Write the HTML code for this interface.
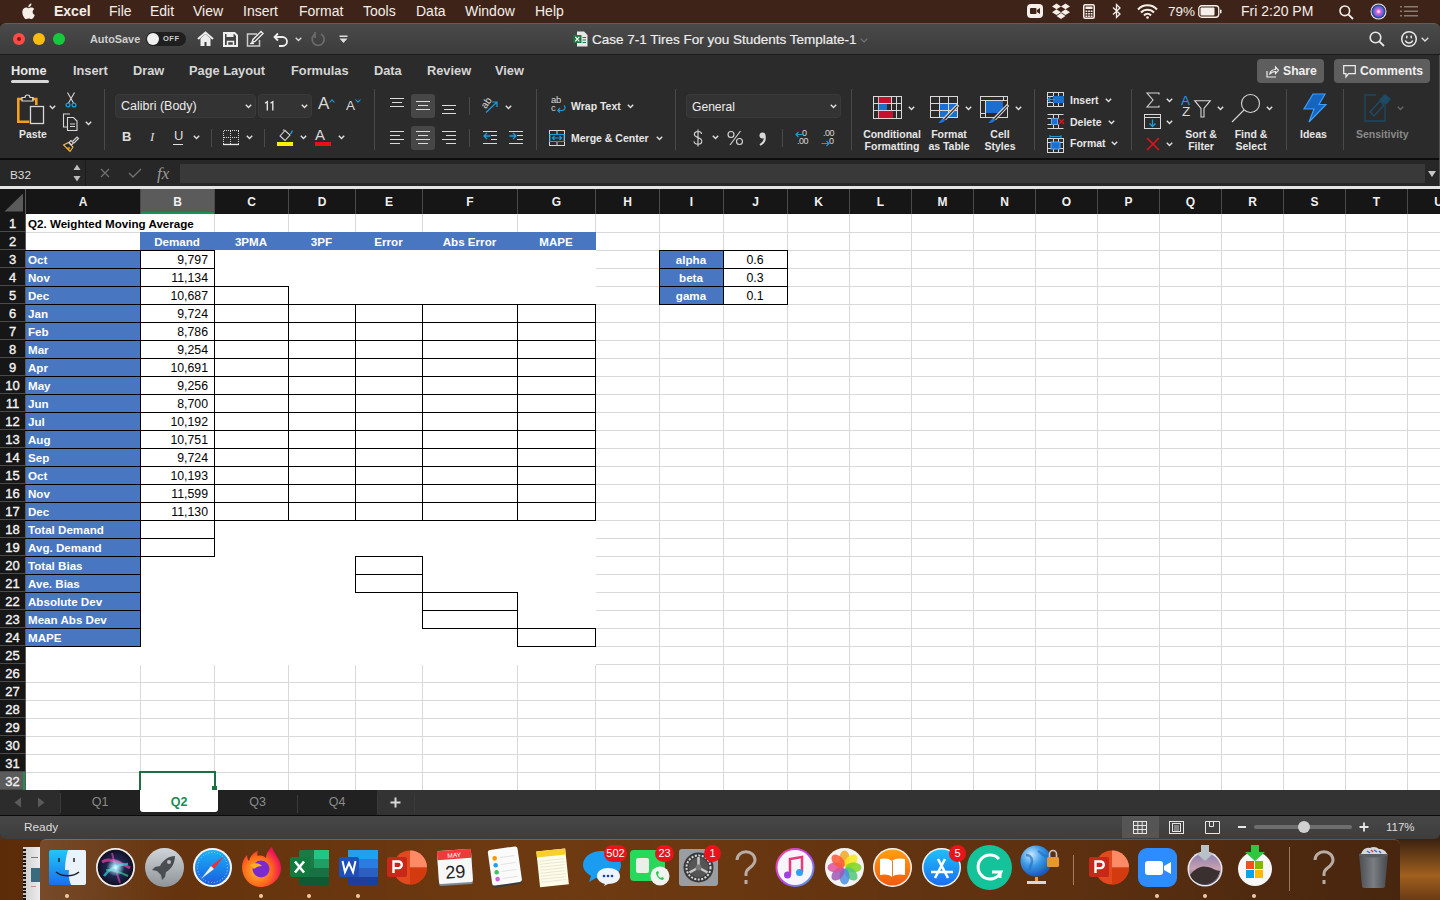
<!DOCTYPE html><html><head><meta charset="utf-8"><style>
*{margin:0;padding:0;box-sizing:border-box}
html,body{width:1440px;height:900px;overflow:hidden;background:#3a1f0e;font-family:"Liberation Sans",sans-serif}
.a{position:absolute}
svg{position:absolute;overflow:visible}
.mb{position:absolute;top:3px;font-size:14px;color:#f5eee9;line-height:17px;white-space:nowrap}
.tb{position:absolute;top:63px;font-size:12.8px;font-weight:bold;color:#d9d9d9;line-height:15px;white-space:nowrap}
.rl{position:absolute;font-size:11px;color:#e6e6e6;line-height:12px;white-space:nowrap;text-align:center}
.sep{position:absolute;width:1px;background:#4a4a4a}
.ch{position:absolute;top:189px;height:25px;background:#161616;color:#f0f0f0;font-size:12px;font-weight:bold;text-align:center;line-height:27px}
.rh{position:absolute;left:0;width:25px;height:17px;color:#f4f4f4;font-size:13px;font-weight:normal;text-align:center;line-height:20px;-webkit-text-stroke:0.35px #f4f4f4}
.t{position:absolute;white-space:nowrap;line-height:18px;height:18px}
.lb{font-size:11.6px;font-weight:bold;color:#fff}
.nm{font-size:12.3px;color:#000}
.bx{position:absolute;border:1px solid #000}
.gv{position:absolute;width:1px;background:#d6d6d6}
.gh{position:absolute;height:1px;background:#d6d6d6}
.bl{position:absolute;background:#4876c0}
</style></head><body>
<div class="a" style="left:0;top:820px;width:1440px;height:80px;background:linear-gradient(90deg,#5a2e10 0%,#7a4418 30%,#6a3a16 60%,#3e2410 100%)"></div>
<div class="a" style="left:0;top:0;width:1440px;height:23px;background:#3e2418"></div>
<svg style="left:21px;top:3px" width="14" height="17" viewBox="0 0 14 17"><path fill="#f5eee9" d="M11.6 9c0-2 1.6-2.9 1.7-3C12.4 4.7 11 4.500 10.500 4.500 9.300 4.400 8.200 5.200 7.600 5.200 7 5.200 6 4.500 5.100 4.500 3.800 4.500 2.600 5.300 1.900 6.500 0.600 8.800 1.600 12.300 2.900 14.200 3.500 15.100 4.300 16.200 5.300 16.100 6.300 16.100 6.600 15.500 7.800 15.500 9 15.500 9.300 16.100 10.300 16.100 11.400 16.100 12 15.100 12.700 14.200 13.400 13.100 13.700 12.100 13.700 12 13.700 12 11.600 11.200 11.600 9zM9.700 3.100C10.200 2.400 10.600 1.500 10.500 0.600 9.700 0.600 8.700 1.100 8.200 1.800 7.700 2.400 7.200 3.300 7.400 4.200 8.200 4.300 9.100 3.800 9.700 3.100z"/></svg>
<div class="mb" style="left:54px;font-weight:bold;">Excel</div>
<div class="mb" style="left:109px;">File</div>
<div class="mb" style="left:150px;">Edit</div>
<div class="mb" style="left:193px;">View</div>
<div class="mb" style="left:243px;">Insert</div>
<div class="mb" style="left:299px;">Format</div>
<div class="mb" style="left:363px;">Tools</div>
<div class="mb" style="left:416px;">Data</div>
<div class="mb" style="left:465px;">Window</div>
<div class="mb" style="left:535px;">Help</div>
<svg style="left:1027px;top:4px" width="16" height="14" viewBox="0 0 16 14"><rect x="0" y="0" width="16" height="14" rx="4" fill="#f5eee9"/><rect x="3" y="4" width="6.5" height="6" rx="1" fill="#3e2418"/><path d="M10 6l3-2v6l-3-2z" fill="#3e2418"/></svg>
<svg style="left:1052px;top:3px" width="18" height="16" viewBox="0 0 18 16"><g fill="#f5eee9"><path d="M4.5 0.5L0 3.4l4.5 2.9L9 3.400z"/><path d="M13.500 0.500L9 3.400l4.500 2.900L18 3.400z"/><path d="M4.500 6.300L0 9.200l4.500 2.900L9 9.200z"/><path d="M13.500 6.300L9 9.200l4.500 2.900L18 9.200z"/><path d="M4.500 13L9 15.900 13.500 13 9 10.100z"/></g></svg>
<svg style="left:1083px;top:4px" width="12" height="15" viewBox="0 0 12 15"><rect x="0.75" y="0.75" width="10.5" height="13.5" rx="1.5" fill="none" stroke="#f5eee9" stroke-width="1.5"/><rect x="2.5" y="2.5" width="7" height="2.5" fill="#f5eee9"/><g fill="#f5eee9"><rect x="2.5" y="6.5" width="1.8" height="1.5"/><rect x="5.1" y="6.5" width="1.8" height="1.5"/><rect x="7.7" y="6.5" width="1.8" height="1.5"/><rect x="2.5" y="9" width="1.8" height="1.5"/><rect x="5.1" y="9" width="1.8" height="1.5"/><rect x="7.7" y="9" width="1.8" height="1.5"/><rect x="2.5" y="11.5" width="1.8" height="1.5"/><rect x="5.1" y="11.5" width="1.8" height="1.5"/><rect x="7.7" y="11.5" width="1.8" height="1.5"/></g></svg>
<svg style="left:1112px;top:3px" width="10" height="16" viewBox="0 0 10 16"><path d="M1 4.5l7 6.500-3.500 3.500V1.500L8 5 1 11.500" fill="none" stroke="#f5eee9" stroke-width="1.3"/></svg>
<svg style="left:1137px;top:4px" width="21" height="15" viewBox="0 0 21 15"><path d="M1 5.5a13 13 0 0 1 19 0" fill="none" stroke="#f5eee9" stroke-width="2"/><path d="M4 8.500a9 9 0 0 1 13 0" fill="none" stroke="#f5eee9" stroke-width="2"/><path d="M7 11.500a4.500 4.500 0 0 1 7 0" fill="none" stroke="#f5eee9" stroke-width="2"/><circle cx="10.500" cy="13.500" r="1.300" fill="#f5eee9"/></svg>
<div class="mb" style="left:1168px;font-size:13.5px">79%</div>
<svg style="left:1198px;top:5px" width="24" height="13" viewBox="0 0 24 13"><rect x="0.75" y="0.75" width="20" height="11.5" rx="3" fill="none" stroke="#f5eee9" stroke-width="1.3"/><rect x="2.5" y="2.5" width="14" height="8" rx="1" fill="#f5eee9"/><rect x="22" y="4.5" width="1.5" height="4" rx="0.7" fill="#f5eee9"/></svg>
<div class="mb" style="left:1241px;font-size:14px">Fri 2:20 PM</div>
<svg style="left:1339px;top:5px" width="15" height="15" viewBox="0 0 15 15"><circle cx="5.800" cy="5.800" r="4.800" fill="none" stroke="#f5eee9" stroke-width="1.6"/><path d="M9.300 9.300L14 14" stroke="#f5eee9" stroke-width="1.8"/></svg>
<svg style="left:1370px;top:3px" width="17" height="17" viewBox="0 0 17 17"><defs><radialGradient id="sr" cx="50%" cy="50%" r="50%"><stop offset="0" stop-color="#fff"/><stop offset="0.35" stop-color="#e05ad0"/><stop offset="0.7" stop-color="#4a6ad8"/><stop offset="1" stop-color="#2a2a60"/></radialGradient></defs><circle cx="8.500" cy="8.500" r="8" fill="#eee"/><circle cx="8.500" cy="8.500" r="7" fill="url(#sr)"/></svg>
<svg style="left:1400px;top:5px" width="18" height="13" viewBox="0 0 18 13"><g fill="#8a7a72"><rect x="0" y="1" width="2" height="1.5"/><rect x="4" y="1" width="14" height="1.5"/><rect x="0" y="5.5" width="2" height="1.5"/><rect x="4" y="5.5" width="14" height="1.5"/><rect x="0" y="10" width="2" height="1.5"/><rect x="4" y="10" width="14" height="1.5"/></g></svg>
<div class="a" style="left:0;top:23px;width:1440px;height:816px;background:#2b2b2b;border-radius:6px;overflow:hidden"></div>
<div class="a" style="left:0;top:23px;width:1440px;height:32px;background:linear-gradient(#4a4a4a,#3b3b3b);border-radius:6px 6px 0 0;border-top:1px solid #5e5e5e"></div>
<div class="a" style="left:0;top:54px;width:1440px;height:1px;background:#1a1a1a"></div>
<div class="a" style="left:13px;top:33px;width:12px;height:12px;border-radius:6px;background:#fd4b45"></div>
<div class="a" style="left:17px;top:37px;width:4px;height:4px;border-radius:2px;background:#8a1410"></div>
<div class="a" style="left:33px;top:33px;width:12px;height:12px;border-radius:6px;background:#fdbb0f"></div>
<div class="a" style="left:53px;top:33px;width:12px;height:12px;border-radius:6px;background:#15c93a"></div>
<div class="a" style="left:90px;top:32px;font-size:10.9px;color:#cfcfcf;line-height:15px;font-weight:bold">AutoSave</div>
<div class="a" style="left:146px;top:32px;width:40px;height:14px;border-radius:7px;background:#1f1f1f"></div>
<div class="a" style="left:147px;top:33px;width:12px;height:12px;border-radius:6px;background:#f0f0f0"></div>
<div class="a" style="left:163px;top:34px;font-size:7.5px;color:#cfcfcf;line-height:10px;font-weight:bold;letter-spacing:0.5px">OFF</div>
<svg style="left:197px;top:31px" width="17" height="16" viewBox="0 0 17 16"><path d="M1 8L8.5 1.5 16 8" fill="none" stroke="#eee" stroke-width="2"/><path d="M3.5 7.5V15h4v-4h2v4h4V7.5L8.5 3z" fill="#eee"/></svg>
<svg style="left:223px;top:32px" width="15" height="15" viewBox="0 0 15 15"><path d="M1 1h10.500L14 3.500V14H1z" fill="none" stroke="#eee" stroke-width="2"/><rect x="3.500" y="1.500" width="7" height="3.500" fill="#eee"/><rect x="4.500" y="9.500" width="6" height="4" fill="none" stroke="#eee" stroke-width="1.500"/></svg>
<svg style="left:246px;top:31px" width="19" height="16" viewBox="0 0 19 16"><path d="M11 3H1.500v12h12V9" fill="none" stroke="#ccc" stroke-width="1.500"/><path d="M6 11.500l1-3 8-8 2 2-8 8z" fill="none" stroke="#eee" stroke-width="1.400"/><path d="M4 12.500h4" stroke="#eee" stroke-width="1.300"/></svg>
<svg style="left:273px;top:32px" width="16" height="15" viewBox="0 0 16 15"><path d="M5 1.500L1.500 5 5 8.500" fill="none" stroke="#eee" stroke-width="1.800"/><path d="M2 5h7.500a4.500 4.500 0 0 1 0 9H6" fill="none" stroke="#eee" stroke-width="1.800"/></svg>
<svg style="left:295px;top:37px" width="7" height="5" viewBox="0 0 7 5"><path d="M0.700 0.700L3.500 3.500 6.300 0.700" fill="none" stroke="#ddd" stroke-width="1.300"/></svg>
<svg style="left:310px;top:31px" width="16" height="16" viewBox="0 0 16 16"><path d="M5 1v6" fill="none" stroke="#6a6a6a" stroke-width="1.800"/><path d="M5 3.200A6 6 0 1 0 11 3" fill="none" stroke="#6a6a6a" stroke-width="1.800"/></svg>
<svg style="left:339px;top:35px" width="9" height="9" viewBox="0 0 9 9"><rect x="0.5" y="0.5" width="8" height="1.5" fill="#ddd"/><path d="M0.500 3.500h8L4.500 8z" fill="#ddd"/></svg>
<svg style="left:573px;top:31px" width="15" height="16" viewBox="0 0 15 16"><path d="M4 0.500h7l3.500 3.500v11.500H4z" fill="#e8e8e8"/><rect x="0.500" y="4" width="8" height="8" fill="#1e7b45"/><path d="M2.300 5.800l4 4.500M6.300 5.800l-4 4.500" stroke="#fff" stroke-width="1.100"/><g fill="#1e7b45"><rect x="9.500" y="6" width="3.500" height="1"/><rect x="9.500" y="8.500" width="3.500" height="1"/><rect x="9.500" y="11" width="3.500" height="1"/></g></svg>
<div class="a" style="left:592px;top:32px;font-size:13.5px;color:#ececec;line-height:16px;white-space:nowrap;-webkit-text-stroke:0.2px #ececec">Case 7-1 Tires For you Students Template-1</div>
<svg style="left:860px;top:38px" width="8" height="5" viewBox="0 0 8 5"><path d="M0.700 0.700L4 4 7.300 0.700" fill="none" stroke="#777" stroke-width="1.200"/></svg>
<svg style="left:1369px;top:31px" width="16" height="16" viewBox="0 0 16 16"><circle cx="6.500" cy="6.500" r="5.300" fill="none" stroke="#e8e8e8" stroke-width="1.600"/><path d="M10.300 10.300L15 15" stroke="#e8e8e8" stroke-width="1.800"/></svg>
<svg style="left:1401px;top:31px" width="18" height="18" viewBox="0 0 18 18"><circle cx="8" cy="8" r="7.300" fill="none" stroke="#e8e8e8" stroke-width="1.500"/><rect x="5" y="4.500" width="1.500" height="3" rx="0.700" fill="#e8e8e8"/><rect x="9.500" y="4.500" width="1.500" height="3" rx="0.700" fill="#e8e8e8"/><path d="M4.300 9.500a4 4 0 0 0 7.400 0" fill="none" stroke="#e8e8e8" stroke-width="1.400"/></svg>
<svg style="left:1421px;top:37px" width="8" height="5" viewBox="0 0 8 5"><path d="M0.700 0.700L4 4 7.300 0.700" fill="none" stroke="#ddd" stroke-width="1.300"/></svg>
<div class="a" style="left:0;top:55px;width:1440px;height:103px;background:#2b2b2b"></div>
<div class="tb" style="left:11px;color:#e8e8e8">Home</div>
<div class="tb" style="left:73px;color:#d6d6d6">Insert</div>
<div class="tb" style="left:133px;color:#d6d6d6">Draw</div>
<div class="tb" style="left:189px;color:#d6d6d6">Page Layout</div>
<div class="tb" style="left:291px;color:#d6d6d6">Formulas</div>
<div class="tb" style="left:374px;color:#d6d6d6">Data</div>
<div class="tb" style="left:427px;color:#d6d6d6">Review</div>
<div class="tb" style="left:495px;color:#d6d6d6">View</div>
<div class="a" style="left:11px;top:80px;width:38px;height:3px;border-radius:2px;background:#d8d8d8"></div>
<div class="a" style="left:1257px;top:59px;width:67px;height:24px;border-radius:4px;background:#5e5e5e"></div>
<svg style="left:1266px;top:65px" width="13" height="13" viewBox="0 0 13 13"><path d="M1 6v6h9" fill="none" stroke="#eee" stroke-width="1.200"/><path d="M3.500 9.500c0.500-3 2.500-5 6-5V2l3 3.300-3 3.200V6.500c-2.500 0-4.500 1-6 3z" fill="none" stroke="#eee" stroke-width="1.100"/></svg>
<div class="a" style="left:1283px;top:64px;font-size:12.2px;font-weight:bold;color:#f0f0f0;line-height:15px">Share</div>
<div class="a" style="left:1334px;top:59px;width:96px;height:24px;border-radius:4px;background:#5e5e5e"></div>
<svg style="left:1343px;top:65px" width="13" height="13" viewBox="0 0 13 13"><path d="M0.700 0.700h11.600v8H5.500L3 12V8.700H0.700z" fill="none" stroke="#eee" stroke-width="1.200"/></svg>
<div class="a" style="left:1360px;top:64px;font-size:12.2px;font-weight:bold;color:#f0f0f0;line-height:15px">Comments</div>
<div class="a" style="left:0;top:158px;width:1440px;height:2px;background:#0e0e0e"></div>
<svg style="left:16px;top:93px" width="30" height="32" viewBox="0 0 30 32"><path d="M6 6H2.300V28.700h11" fill="none" stroke="#f7a11a" stroke-width="2.600"/><path d="M16 6h4.300V12" fill="none" stroke="#f7a11a" stroke-width="2.600"/><path d="M6 8V4.500h3a2.500 2.500 0 0 1 5 0h3V8z" fill="none" stroke="#d8d8d8" stroke-width="1.200"/><rect x="14.500" y="13.500" width="13" height="17" fill="#2b2b2b" stroke="#d8d8d8" stroke-width="1.300"/></svg>
<svg style="left:49px;top:105px" width="7" height="5" viewBox="0 0 7 5"><path d="M0.800 0.800L3.500 3.600 6.200 0.800" fill="none" stroke="#e0e0e0" stroke-width="1.4"/></svg>
<div class="rl" style="left:19px;top:129px;font-size:10.4px;font-weight:bold;color:#e6e6e6">Paste</div>
<svg style="left:65px;top:92px" width="12" height="16" viewBox="0 0 12 16"><path d="M2.500 0.500L8.500 11M9.500 0.500L3.500 11" fill="none" stroke="#d8d8d8" stroke-width="1.100"/><circle cx="3" cy="13" r="1.900" fill="none" stroke="#1a9de0" stroke-width="1.300"/><circle cx="9" cy="13" r="1.900" fill="none" stroke="#1a9de0" stroke-width="1.300"/></svg>
<svg style="left:62px;top:113px" width="18" height="18" viewBox="0 0 18 18"><path d="M8 1H1.500v13H5" fill="none" stroke="#d8d8d8" stroke-width="1.100"/><path d="M5.500 4.500h6l3.500 3.500v9.500H5.500z" fill="none" stroke="#d8d8d8" stroke-width="1.100"/><path d="M8 11h5M8 13.500h5" stroke="#d8d8d8" stroke-width="1"/></svg>
<svg style="left:85px;top:121px" width="7" height="5" viewBox="0 0 7 5"><path d="M0.800 0.800L3.500 3.600 6.200 0.800" fill="none" stroke="#e0e0e0" stroke-width="1.4"/></svg>
<svg style="left:62px;top:135px" width="18" height="17" viewBox="0 0 18 17"><path d="M1.500 10l5-2.500 4.500 4.500-3 4.500z" fill="none" stroke="#f0c060" stroke-width="1.100"/><path d="M4 13l4-1-1 4z" fill="#f5a010"/><path d="M7 7.500l2.500 2.500 2-2-2.500-2.500z" fill="none" stroke="#d8d8d8" stroke-width="1.100"/><path d="M10.500 6.500l4.500-4.500 1.500 1.500-4.500 4.500" fill="none" stroke="#d8d8d8" stroke-width="1.100"/></svg>
<div class="sep" style="left:104px;top:89px;height:61px"></div>
<div class="a" style="left:115px;top:94px;width:141px;height:24px;border-radius:4px;background:#333;border:1px solid #3a3a3a"></div>
<div class="a" style="left:121px;top:99px;font-size:12.5px;color:#ececec;line-height:15px;white-space:nowrap">Calibri (Body)</div>
<svg style="left:245px;top:104px" width="7" height="5" viewBox="0 0 7 5"><path d="M0.800 0.800L3.500 3.600 6.200 0.800" fill="none" stroke="#e0e0e0" stroke-width="1.4"/></svg>
<div class="a" style="left:258px;top:94px;width:54px;height:24px;border-radius:4px;background:#333;border:1px solid #3a3a3a"></div>
<svg style="left:264px;top:101px" width="11" height="10" viewBox="0 0 11 10"><path d="M1 2.200L3.300 0.700V9.500M6.500 2.200L8.800 0.700V9.500" fill="none" stroke="#ececec" stroke-width="1.300"/></svg>
<svg style="left:301px;top:104px" width="7" height="5" viewBox="0 0 7 5"><path d="M0.800 0.800L3.500 3.600 6.200 0.800" fill="none" stroke="#e0e0e0" stroke-width="1.4"/></svg>
<div class="a" style="left:318px;top:95px;font-size:17px;color:#d8d8d8;line-height:18px">A</div>
<svg style="left:329px;top:99px" width="6" height="4" viewBox="0 0 6 4"><path d="M0.500 3.500L3 0.800 5.500 3.500" fill="none" stroke="#1a9de0" stroke-width="1.100"/></svg>
<div class="a" style="left:346px;top:98px;font-size:13.5px;color:#d8d8d8;line-height:15px">A</div>
<svg style="left:355px;top:99px" width="6" height="4" viewBox="0 0 6 4"><path d="M0.500 0.500L3 3.200 5.500 0.500" fill="none" stroke="#1a9de0" stroke-width="1.100"/></svg>
<div class="a" style="left:122px;top:129px;font-size:13px;font-weight:bold;color:#dedede;line-height:15px">B</div>
<div class="a" style="left:150px;top:129px;font-size:13px;font-style:italic;color:#dedede;line-height:15px;font-family:'Liberation Serif',serif">I</div>
<div class="a" style="left:174px;top:129px;font-size:13px;color:#dedede;line-height:14px">U</div>
<div class="a" style="left:173px;top:144px;width:10px;height:1px;background:#dedede"></div>
<svg style="left:193px;top:135px" width="7" height="5" viewBox="0 0 7 5"><path d="M0.800 0.800L3.500 3.600 6.200 0.800" fill="none" stroke="#e0e0e0" stroke-width="1.4"/></svg>
<div class="sep" style="left:211px;top:129px;height:18px"></div>
<svg style="left:223px;top:130px" width="17" height="16" viewBox="0 0 17 16"><g fill="none" stroke="#d8d8d8" stroke-width="1" stroke-dasharray="1 1"><path d="M1 0.500h15M0.500 1v13M15.500 1v13M7.500 1v13M1 7.500h15"/></g><path d="M0 14.500h16" stroke="#e8e8e8" stroke-width="1.300"/></svg>
<svg style="left:246px;top:135px" width="7" height="5" viewBox="0 0 7 5"><path d="M0.800 0.800L3.500 3.600 6.200 0.800" fill="none" stroke="#e0e0e0" stroke-width="1.4"/></svg>
<div class="sep" style="left:264px;top:129px;height:18px"></div>
<svg style="left:278px;top:129px" width="16" height="13" viewBox="0 0 16 13"><path d="M2 7l5-5.500 5 4.500-5 5.500z" fill="none" stroke="#d8d8d8" stroke-width="1.100"/><path d="M5 1.500c0-1 1.500-1 2 0" fill="none" stroke="#d8d8d8" stroke-width="1"/><path d="M12.500 5c1-1 2-2 1.500-3.500" fill="none" stroke="#1a9de0" stroke-width="1.500"/></svg>
<div class="a" style="left:277px;top:142px;width:16px;height:4px;background:#f7f000"></div>
<svg style="left:300px;top:135px" width="7" height="5" viewBox="0 0 7 5"><path d="M0.800 0.800L3.500 3.600 6.200 0.800" fill="none" stroke="#e0e0e0" stroke-width="1.4"/></svg>
<div class="a" style="left:315px;top:127px;font-size:15px;color:#d8d8d8;line-height:16px">A</div>
<div class="a" style="left:315px;top:142px;width:16px;height:4px;background:#e8111a"></div>
<svg style="left:338px;top:135px" width="7" height="5" viewBox="0 0 7 5"><path d="M0.800 0.800L3.500 3.600 6.200 0.800" fill="none" stroke="#e0e0e0" stroke-width="1.4"/></svg>
<div class="sep" style="left:374px;top:89px;height:61px"></div>
<div class="a" style="left:390.0px;top:97.5px;width:14px;height:1.3px;background:#dadada"></div>
<div class="a" style="left:392.0px;top:101.6px;width:10px;height:1.3px;background:#dadada"></div>
<div class="a" style="left:390.0px;top:105.7px;width:14px;height:1.3px;background:#dadada"></div>
<div class="a" style="left:411px;top:94px;width:24px;height:24px;border-radius:3px;background:#474747"></div>
<div class="a" style="left:416.0px;top:100.5px;width:14px;height:1.3px;background:#dadada"></div>
<div class="a" style="left:418.0px;top:104.6px;width:10px;height:1.3px;background:#dadada"></div>
<div class="a" style="left:416.0px;top:108.7px;width:14px;height:1.3px;background:#dadada"></div>
<div class="a" style="left:442.0px;top:104.5px;width:14px;height:1.3px;background:#dadada"></div>
<div class="a" style="left:444.0px;top:108.6px;width:10px;height:1.3px;background:#dadada"></div>
<div class="a" style="left:442.0px;top:112.7px;width:14px;height:1.3px;background:#dadada"></div>
<div class="sep" style="left:469px;top:97px;height:18px"></div>
<div class="a" style="left:481px;top:98px;font-size:10px;color:#d8d8d8;line-height:10px;transform:rotate(-55deg);transform-origin:50% 50%">ab</div>
<svg style="left:485px;top:101px" width="13" height="12" viewBox="0 0 13 12"><path d="M1 11.500L12 1M7 1h5v5" fill="none" stroke="#1a9de0" stroke-width="1.200"/></svg>
<svg style="left:505px;top:105px" width="7" height="5" viewBox="0 0 7 5"><path d="M0.800 0.800L3.500 3.600 6.200 0.800" fill="none" stroke="#e0e0e0" stroke-width="1.4"/></svg>
<div class="a" style="left:390px;top:130.8px;width:14px;height:1.3px;background:#dadada"></div>
<div class="a" style="left:390px;top:134.8px;width:10px;height:1.3px;background:#dadada"></div>
<div class="a" style="left:390px;top:138.8px;width:14px;height:1.3px;background:#dadada"></div>
<div class="a" style="left:390px;top:142.8px;width:10px;height:1.3px;background:#dadada"></div>
<div class="a" style="left:411px;top:126px;width:24px;height:24px;border-radius:3px;background:#474747"></div>
<div class="a" style="left:416.0px;top:130.8px;width:14px;height:1.3px;background:#dadada"></div>
<div class="a" style="left:418.0px;top:134.8px;width:10px;height:1.3px;background:#dadada"></div>
<div class="a" style="left:416.0px;top:138.8px;width:14px;height:1.3px;background:#dadada"></div>
<div class="a" style="left:418.0px;top:142.8px;width:10px;height:1.3px;background:#dadada"></div>
<div class="a" style="left:442px;top:130.8px;width:14px;height:1.3px;background:#dadada"></div>
<div class="a" style="left:446px;top:134.8px;width:10px;height:1.3px;background:#dadada"></div>
<div class="a" style="left:442px;top:138.8px;width:14px;height:1.3px;background:#dadada"></div>
<div class="a" style="left:446px;top:142.8px;width:10px;height:1.3px;background:#dadada"></div>
<div class="sep" style="left:469px;top:129px;height:18px"></div>
<div class="a" style="left:483px;top:130.8px;width:14px;height:1.3px;background:#dadada"></div>
<div class="a" style="left:491px;top:134.8px;width:6px;height:1.3px;background:#dadada"></div>
<div class="a" style="left:491px;top:138.8px;width:6px;height:1.3px;background:#dadada"></div>
<div class="a" style="left:483px;top:142.8px;width:14px;height:1.3px;background:#dadada"></div>
<svg style="left:483px;top:131.500px" width="8" height="8" viewBox="0 0 8 8"><path d="M7.500 4H1M4 1L1 4l3 3" fill="none" stroke="#1a9de0" stroke-width="1.300"/></svg>
<div class="a" style="left:509px;top:130.8px;width:14px;height:1.3px;background:#dadada"></div>
<div class="a" style="left:517px;top:134.8px;width:6px;height:1.3px;background:#dadada"></div>
<div class="a" style="left:517px;top:138.8px;width:6px;height:1.3px;background:#dadada"></div>
<div class="a" style="left:509px;top:142.8px;width:14px;height:1.3px;background:#dadada"></div>
<svg style="left:509px;top:131.500px" width="8" height="8" viewBox="0 0 8 8"><path d="M0.500 4H7M4 1l3 3-3 3" fill="none" stroke="#1a9de0" stroke-width="1.300"/></svg>
<div class="sep" style="left:536px;top:89px;height:61px"></div>
<div class="a" style="left:551px;top:96px;font-size:9.5px;color:#d8d8d8;line-height:8px;letter-spacing:-0.3px">ab<br>c</div>
<svg style="left:557px;top:105px" width="9" height="8" viewBox="0 0 9 8"><path d="M7 0.500c2 2 1 5-2 5H1M3 3L0.800 5.500 3 7.500" fill="none" stroke="#1a9de0" stroke-width="1.200"/></svg>
<div class="rl" style="left:571px;top:100px;font-size:10.5px;font-weight:bold;color:#e6e6e6">Wrap Text</div>
<svg style="left:627px;top:104px" width="7" height="5" viewBox="0 0 7 5"><path d="M0.800 0.800L3.500 3.600 6.200 0.800" fill="none" stroke="#e0e0e0" stroke-width="1.4"/></svg>
<svg style="left:549px;top:130px" width="16" height="16" viewBox="0 0 16 16"><rect x="0.500" y="0.500" width="15" height="15" fill="none" stroke="#d8d8d8" stroke-width="1"/><path d="M0.500 4.500h15M0.500 11.500h15M8 0.500v4M8 11.500v4" stroke="#d8d8d8" stroke-width="1"/><path d="M0.800 4.500h14.400M0.800 11.500h14.400M1 4v8M15 4v8" stroke="#1a9de0" stroke-width="1"/><path d="M3.500 8h9M5.500 6L3.500 8l2 2M10.500 6l2 2-2 2" fill="none" stroke="#1a9de0" stroke-width="1.100"/></svg>
<div class="rl" style="left:571px;top:132px;font-size:10.5px;font-weight:bold;color:#e6e6e6">Merge &amp; Center</div>
<svg style="left:656px;top:136px" width="7" height="5" viewBox="0 0 7 5"><path d="M0.800 0.800L3.500 3.600 6.200 0.800" fill="none" stroke="#e0e0e0" stroke-width="1.4"/></svg>
<div class="sep" style="left:675px;top:89px;height:61px"></div>
<div class="a" style="left:686px;top:94px;width:155px;height:24px;border-radius:4px;background:#333;border:1px solid #3a3a3a"></div>
<div class="a" style="left:692px;top:100px;font-size:12.1px;color:#ececec;line-height:15px">General</div>
<svg style="left:830px;top:104px" width="7" height="5" viewBox="0 0 7 5"><path d="M0.800 0.800L3.500 3.600 6.200 0.800" fill="none" stroke="#e0e0e0" stroke-width="1.4"/></svg>
<svg style="left:693px;top:129px" width="10" height="18" viewBox="0 0 10 18"><path d="M8.500 5C8.500 3.300 7 2.500 5 2.500S1.300 3.500 1.300 5.200c0 4 7.500 2.500 7.500 7 0 1.800-1.700 3-3.800 3S1 14.200 1 12.300M5 0.500v17" fill="none" stroke="#d8d8d8" stroke-width="1.100"/></svg>
<svg style="left:712px;top:135px" width="7" height="5" viewBox="0 0 7 5"><path d="M0.800 0.800L3.500 3.600 6.200 0.800" fill="none" stroke="#e0e0e0" stroke-width="1.4"/></svg>
<svg style="left:727px;top:130px" width="17" height="16" viewBox="0 0 17 16"><circle cx="4" cy="4.500" r="3" fill="none" stroke="#d8d8d8" stroke-width="1.100"/><circle cx="12.500" cy="11.500" r="3" fill="none" stroke="#d8d8d8" stroke-width="1.100"/><path d="M13.500 1L3 15" stroke="#d8d8d8" stroke-width="1.100"/></svg>
<svg style="left:758px;top:132px" width="9" height="14" viewBox="0 0 9 14"><circle cx="4.500" cy="3.500" r="3" fill="#d8d8d8"/><path d="M6.500 4c1 4-1 7-4.500 9" fill="none" stroke="#d8d8d8" stroke-width="2"/></svg>
<div class="sep" style="left:782px;top:129px;height:18px"></div>
<div class="a" style="left:802px;top:129px;font-size:9px;color:#d8d8d8;line-height:9px">0</div>
<div class="a" style="left:797px;top:137px;font-size:9px;color:#d8d8d8;line-height:9px;letter-spacing:-0.5px">.00</div>
<svg style="left:795px;top:131px" width="9" height="7" viewBox="0 0 9 7"><path d="M8.500 3.500H1M3.500 1L1 3.500 3.500 6" fill="none" stroke="#1a9de0" stroke-width="1.200"/></svg>
<div class="a" style="left:823px;top:129px;font-size:9px;color:#d8d8d8;line-height:9px;letter-spacing:-0.5px">.00</div>
<div class="a" style="left:829px;top:137px;font-size:9px;color:#d8d8d8;line-height:9px">0</div>
<svg style="left:821px;top:140px" width="9" height="7" viewBox="0 0 9 7"><path d="M0.500 3.500H8M5.500 1L8 3.500 5.500 6" fill="none" stroke="#1a9de0" stroke-width="1.200"/></svg>
<div class="sep" style="left:851px;top:89px;height:61px"></div>
<svg style="left:873px;top:96px" width="29" height="23" viewBox="0 0 29 23"><rect x="5" y="0.500" width="13" height="7" fill="#c8102e"/><rect x="5" y="7.500" width="9" height="7" fill="#1a73c4"/><rect x="5" y="14.500" width="15" height="8" fill="#c8102e"/><g fill="none" stroke="#d8d8d8" stroke-width="1"><rect x="0.500" y="0.500" width="28" height="22"/><path d="M5.500 0.500v22M18.500 0.500v22M23.500 0.500v22M0.500 7.500h28M0.500 14.500h28"/></g><rect x="5.800" y="1" width="12" height="6" fill="#c8102e"/><rect x="5.800" y="8" width="8" height="6" fill="#1a73c4"/><rect x="5.800" y="15" width="14" height="7" fill="#c8102e"/></svg>
<svg style="left:908px;top:106px" width="7" height="5" viewBox="0 0 7 5"><path d="M0.800 0.800L3.500 3.600 6.200 0.800" fill="none" stroke="#e0e0e0" stroke-width="1.4"/></svg>
<div class="rl" style="left:857px;top:128px;font-size:10.5px;font-weight:bold;color:#e6e6e6;width:70px">Conditional<br>Formatting</div>
<svg style="left:930px;top:96px" width="32" height="28" viewBox="0 0 32 28"><rect x="10" y="7.500" width="18" height="14" fill="#1a6fd1"/><g fill="none" stroke="#d8d8d8" stroke-width="1"><rect x="0.500" y="0.500" width="27" height="21"/><path d="M9.500 0.500v21M18.500 0.500v21M0.500 7.500h27M0.500 14.500h27"/></g><path d="M13 23l14-14.500 1.500 1.500-13 14" fill="#2b2b2b" stroke="#d8d8d8" stroke-width="1.100"/><path d="M8 27c2-1 3-4 5-4.500 2 0 2.500 2 1 3-1.500 1-4 1.500-6 1.500z" fill="#1a73e8"/></svg>
<svg style="left:965px;top:106px" width="7" height="5" viewBox="0 0 7 5"><path d="M0.800 0.800L3.500 3.600 6.200 0.800" fill="none" stroke="#e0e0e0" stroke-width="1.4"/></svg>
<div class="rl" style="left:918px;top:128px;font-size:10.5px;font-weight:bold;color:#e6e6e6;width:62px">Format<br>as Table</div>
<svg style="left:980px;top:96px" width="32" height="28" viewBox="0 0 32 28"><rect x="5" y="5" width="18" height="12" fill="#1a6fd1"/><g fill="none" stroke="#d8d8d8" stroke-width="1"><rect x="0.500" y="0.500" width="27" height="21"/><path d="M0.500 4.500h27M0.500 17.500h5M5.500 4.500v17M23.500 0.500v4"/></g><path d="M13 23l14-14.500 1.500 1.500-13 14" fill="#2b2b2b" stroke="#d8d8d8" stroke-width="1.100"/><path d="M8 27c2-1 3-4 5-4.500 2 0 2.500 2 1 3-1.500 1-4 1.500-6 1.500z" fill="#1a73e8"/></svg>
<svg style="left:1015px;top:106px" width="7" height="5" viewBox="0 0 7 5"><path d="M0.800 0.800L3.500 3.600 6.200 0.800" fill="none" stroke="#e0e0e0" stroke-width="1.4"/></svg>
<div class="rl" style="left:969px;top:128px;font-size:10.5px;font-weight:bold;color:#e6e6e6;width:62px">Cell<br>Styles</div>
<div class="sep" style="left:1034px;top:89px;height:61px"></div>
<svg style="left:1047px;top:92px" width="18" height="16" viewBox="0 0 18 16"><g fill="none" stroke="#d8d8d8" stroke-width="1"><rect x="0.500" y="0.500" width="16" height="14"/><path d="M0.500 4.500h16M0.500 10.500h16M6.500 0.500v14M11.500 0.500v14"/></g><rect x="6" y="4" width="11" height="7" fill="#1a6fd1"/><path d="M8 7.500H1M3.500 5L1 7.500 3.500 10" fill="none" stroke="#1a9de0" stroke-width="1.200"/></svg>
<div class="rl" style="left:1070px;top:94px;font-size:10.5px;font-weight:bold;color:#e6e6e6">Insert</div>
<svg style="left:1105px;top:98px" width="7" height="5" viewBox="0 0 7 5"><path d="M0.800 0.800L3.500 3.600 6.200 0.800" fill="none" stroke="#e0e0e0" stroke-width="1.4"/></svg>
<svg style="left:1047px;top:114px" width="18" height="16" viewBox="0 0 18 16"><g fill="none" stroke="#d8d8d8" stroke-width="1"><path d="M0.500 0.500h16M0.500 14.500h16M0.500 4.500h4M0.500 10.500h4M6.500 0.500v4M11.500 0.500v4M6.500 10.500v4M11.500 10.500v4"/></g><rect x="4.500" y="4.500" width="6" height="6" fill="#1a6fd1" stroke="#5aaaf0" stroke-width="1"/><path d="M12 5l5 5M17 5l-5 5" stroke="#e8111a" stroke-width="1.300"/></svg>
<div class="rl" style="left:1070px;top:116px;font-size:10.5px;font-weight:bold;color:#e6e6e6">Delete</div>
<svg style="left:1108px;top:120px" width="7" height="5" viewBox="0 0 7 5"><path d="M0.800 0.800L3.500 3.600 6.200 0.800" fill="none" stroke="#e0e0e0" stroke-width="1.4"/></svg>
<svg style="left:1047px;top:135px" width="18" height="18" viewBox="0 0 18 18"><path d="M3 1.500h11M3 0v3M14 0v3" stroke="#1a9de0" stroke-width="1"/><g fill="none" stroke="#d8d8d8" stroke-width="1"><rect x="0.500" y="3.500" width="16" height="14"/><path d="M0.500 7.500h16M0.500 13.500h16M6.500 3.500v14M11.500 3.500v14"/></g><rect x="4" y="7" width="9" height="7" fill="#1a6fd1" stroke="#5aaaf0"/></svg>
<div class="rl" style="left:1070px;top:137px;font-size:10.5px;font-weight:bold;color:#e6e6e6">Format</div>
<svg style="left:1111px;top:141px" width="7" height="5" viewBox="0 0 7 5"><path d="M0.800 0.800L3.500 3.600 6.200 0.800" fill="none" stroke="#e0e0e0" stroke-width="1.4"/></svg>
<div class="sep" style="left:1131px;top:89px;height:61px"></div>
<svg style="left:1146px;top:92px" width="14" height="16" viewBox="0 0 14 16"><path d="M13 2.500V1H1l6 7-6 7h12v-1.500" fill="none" stroke="#d8d8d8" stroke-width="1.100"/></svg>
<svg style="left:1166px;top:98px" width="7" height="5" viewBox="0 0 7 5"><path d="M0.800 0.800L3.500 3.600 6.200 0.800" fill="none" stroke="#e0e0e0" stroke-width="1.4"/></svg>
<svg style="left:1144px;top:114px" width="18" height="16" viewBox="0 0 18 16"><rect x="0.500" y="0.500" width="16" height="14" fill="none" stroke="#d8d8d8" stroke-width="1"/><path d="M0.500 3.500h16" stroke="#d8d8d8"/><path d="M8.500 5.500v7M5.500 9.500l3 3 3-3" fill="none" stroke="#1a9de0" stroke-width="1.300"/></svg>
<svg style="left:1166px;top:120px" width="7" height="5" viewBox="0 0 7 5"><path d="M0.800 0.800L3.500 3.600 6.200 0.800" fill="none" stroke="#e0e0e0" stroke-width="1.4"/></svg>
<svg style="left:1146px;top:137px" width="14" height="14" viewBox="0 0 14 14"><path d="M1 1l12 12M13 1L1 13" stroke="#e8111a" stroke-width="1.500"/></svg>
<svg style="left:1166px;top:142px" width="7" height="5" viewBox="0 0 7 5"><path d="M0.800 0.800L3.500 3.600 6.200 0.800" fill="none" stroke="#e0e0e0" stroke-width="1.4"/></svg>
<div class="a" style="left:1181px;top:94px;font-size:13.5px;color:#1a9de0;line-height:14px">A</div>
<div class="a" style="left:1182px;top:105px;font-size:13.5px;color:#d8d8d8;line-height:14px">Z</div>
<svg style="left:1194px;top:100px" width="17" height="18" viewBox="0 0 17 18"><path d="M0.700 0.700h15.600L10 8.500V17H7V8.500z" fill="none" stroke="#d8d8d8" stroke-width="1.100"/></svg>
<svg style="left:1217px;top:106px" width="7" height="5" viewBox="0 0 7 5"><path d="M0.800 0.800L3.500 3.600 6.200 0.800" fill="none" stroke="#e0e0e0" stroke-width="1.4"/></svg>
<div class="rl" style="left:1170px;top:128px;font-size:10.5px;font-weight:bold;color:#e6e6e6;width:62px">Sort &amp;<br>Filter</div>
<svg style="left:1231px;top:93px" width="30" height="30" viewBox="0 0 30 30"><circle cx="19.500" cy="10.500" r="9" fill="none" stroke="#d8d8d8" stroke-width="1.100"/><path d="M13 17L1 29" stroke="#d8d8d8" stroke-width="1.100"/></svg>
<svg style="left:1266px;top:106px" width="7" height="5" viewBox="0 0 7 5"><path d="M0.800 0.800L3.500 3.600 6.200 0.800" fill="none" stroke="#e0e0e0" stroke-width="1.4"/></svg>
<div class="rl" style="left:1220px;top:128px;font-size:10.5px;font-weight:bold;color:#e6e6e6;width:62px">Find &amp;<br>Select</div>
<div class="sep" style="left:1286px;top:89px;height:61px"></div>
<svg style="left:1303px;top:93px" width="24" height="30" viewBox="0 0 24 30"><path d="M10 1h12L16 11.500h7L6 29 11 16H1z" fill="#1565c0" stroke="#3aa0ff" stroke-width="1.200"/></svg>
<div class="rl" style="left:1300px;top:128px;font-size:10.5px;font-weight:bold;color:#e6e6e6">Ideas</div>
<div class="sep" style="left:1343px;top:89px;height:61px"></div>
<svg style="left:1364px;top:92px" width="30" height="30" viewBox="0 0 30 30"><path d="M12 3H1v26h20V13" fill="none" stroke="#1d4a66" stroke-width="1.300"/><path d="M6 20l10-11 4 4-10 11z" fill="none" stroke="#1d4a66" stroke-width="1.500"/><path d="M15 8l6-6 6 5-5 6z" fill="#1d4a66"/></svg>
<svg style="left:1397px;top:106px" width="7" height="5" viewBox="0 0 7 5"><path d="M0.800 0.800L3.500 3.600 6.200 0.800" fill="none" stroke="#666" stroke-width="1.4"/></svg>
<div class="rl" style="left:1356px;top:128px;font-size:10.5px;font-weight:bold;color:#8a8a8a">Sensitivity</div>
<div class="a" style="left:0;top:160px;width:1440px;height:26px;background:#272727"></div>
<div class="a" style="left:85px;top:160px;width:1px;height:26px;background:#1c1c1c"></div>
<div class="a" style="left:10px;top:168px;font-size:11.8px;color:#dcdcdc;line-height:15px">B32</div>
<svg style="left:73px;top:164px" width="8" height="19" viewBox="0 0 8 19"><path d="M4 0.500L7.500 6H0.500z" fill="#bdbdbd"/><path d="M0.500 12h7L4 17.500z" fill="#bdbdbd"/></svg>
<svg style="left:100px;top:168px" width="10" height="10" viewBox="0 0 10 10"><path d="M1 1l8 8M9 1L1 9" stroke="#707070" stroke-width="1.300"/></svg>
<svg style="left:128px;top:168px" width="14" height="10" viewBox="0 0 14 10"><path d="M1 5l4 4 8-8" fill="none" stroke="#707070" stroke-width="1.400"/></svg>
<div class="a" style="left:157px;top:165px;font-size:17px;font-style:italic;color:#9a9a9a;line-height:18px;font-family:'Liberation Serif',serif">fx</div>
<div class="a" style="left:180px;top:164px;width:1245px;height:19px;background:#393939"></div>
<svg style="left:1428px;top:171px" width="8" height="6" viewBox="0 0 8 6"><path d="M0 0h8L4 6z" fill="#c8c8c8"/></svg>
<div class="a" style="left:0;top:186px;width:1440px;height:3px;background:#e4e4e4"></div>
<div class="a" style="left:0;top:189px;width:1440px;height:25px;background:#161616"></div>
<svg style="left:4px;top:193px" width="20" height="19" viewBox="0 0 20 19"><path d="M19 0.500V18.500H0.500z" fill="#5a5a5a"/></svg>
<div class="a" style="left:25px;top:189px;width:1px;height:25px;background:#5a5a5a"></div>
<div class="ch" style="left:26px;width:114px;background:transparent">A</div>
<div class="a" style="left:140px;top:189px;width:1px;height:25px;background:#4a4a4a"></div>
<div class="ch" style="left:141px;width:73px;background:#5b5b5b">B</div>
<div class="a" style="left:214px;top:189px;width:1px;height:25px;background:#4a4a4a"></div>
<div class="ch" style="left:215px;width:73px;background:transparent">C</div>
<div class="a" style="left:288px;top:189px;width:1px;height:25px;background:#4a4a4a"></div>
<div class="ch" style="left:289px;width:66px;background:transparent">D</div>
<div class="a" style="left:355px;top:189px;width:1px;height:25px;background:#4a4a4a"></div>
<div class="ch" style="left:356px;width:66px;background:transparent">E</div>
<div class="a" style="left:422px;top:189px;width:1px;height:25px;background:#4a4a4a"></div>
<div class="ch" style="left:423px;width:94px;background:transparent">F</div>
<div class="a" style="left:517px;top:189px;width:1px;height:25px;background:#4a4a4a"></div>
<div class="ch" style="left:518px;width:77px;background:transparent">G</div>
<div class="a" style="left:595px;top:189px;width:1px;height:25px;background:#4a4a4a"></div>
<div class="ch" style="left:596px;width:63px;background:transparent">H</div>
<div class="a" style="left:659px;top:189px;width:1px;height:25px;background:#4a4a4a"></div>
<div class="ch" style="left:660px;width:63px;background:transparent">I</div>
<div class="a" style="left:723px;top:189px;width:1px;height:25px;background:#4a4a4a"></div>
<div class="ch" style="left:724px;width:63px;background:transparent">J</div>
<div class="a" style="left:787px;top:189px;width:1px;height:25px;background:#4a4a4a"></div>
<div class="ch" style="left:788px;width:61px;background:transparent">K</div>
<div class="a" style="left:849px;top:189px;width:1px;height:25px;background:#4a4a4a"></div>
<div class="ch" style="left:850px;width:61px;background:transparent">L</div>
<div class="a" style="left:911px;top:189px;width:1px;height:25px;background:#4a4a4a"></div>
<div class="ch" style="left:912px;width:61px;background:transparent">M</div>
<div class="a" style="left:973px;top:189px;width:1px;height:25px;background:#4a4a4a"></div>
<div class="ch" style="left:974px;width:61px;background:transparent">N</div>
<div class="a" style="left:1035px;top:189px;width:1px;height:25px;background:#4a4a4a"></div>
<div class="ch" style="left:1036px;width:61px;background:transparent">O</div>
<div class="a" style="left:1097px;top:189px;width:1px;height:25px;background:#4a4a4a"></div>
<div class="ch" style="left:1098px;width:61px;background:transparent">P</div>
<div class="a" style="left:1159px;top:189px;width:1px;height:25px;background:#4a4a4a"></div>
<div class="ch" style="left:1160px;width:61px;background:transparent">Q</div>
<div class="a" style="left:1221px;top:189px;width:1px;height:25px;background:#4a4a4a"></div>
<div class="ch" style="left:1222px;width:61px;background:transparent">R</div>
<div class="a" style="left:1283px;top:189px;width:1px;height:25px;background:#4a4a4a"></div>
<div class="ch" style="left:1284px;width:61px;background:transparent">S</div>
<div class="a" style="left:1345px;top:189px;width:1px;height:25px;background:#4a4a4a"></div>
<div class="ch" style="left:1346px;width:61px;background:transparent">T</div>
<div class="a" style="left:1407px;top:189px;width:1px;height:25px;background:#4a4a4a"></div>
<div class="ch" style="left:1408px;width:61px;background:transparent">U</div>
<div class="a" style="left:1469px;top:189px;width:1px;height:25px;background:#4a4a4a"></div>
<div class="a" style="left:141px;top:212px;width:73px;height:2px;background:#1f8f4f"></div>
<div class="a" style="left:0;top:214px;width:1440px;height:576px;background:#fff"></div>
<div class="a" style="left:0;top:214px;width:25px;height:576px;background:#161616"></div>
<div class="rh" style="top:214px;background:transparent">1</div>
<div class="a" style="left:0;top:231px;width:25px;height:1px;background:#4a4a4a"></div>
<div class="rh" style="top:232px;background:transparent">2</div>
<div class="a" style="left:0;top:249px;width:25px;height:1px;background:#4a4a4a"></div>
<div class="rh" style="top:250px;background:transparent">3</div>
<div class="a" style="left:0;top:267px;width:25px;height:1px;background:#4a4a4a"></div>
<div class="rh" style="top:268px;background:transparent">4</div>
<div class="a" style="left:0;top:285px;width:25px;height:1px;background:#4a4a4a"></div>
<div class="rh" style="top:286px;background:transparent">5</div>
<div class="a" style="left:0;top:303px;width:25px;height:1px;background:#4a4a4a"></div>
<div class="rh" style="top:304px;background:transparent">6</div>
<div class="a" style="left:0;top:321px;width:25px;height:1px;background:#4a4a4a"></div>
<div class="rh" style="top:322px;background:transparent">7</div>
<div class="a" style="left:0;top:339px;width:25px;height:1px;background:#4a4a4a"></div>
<div class="rh" style="top:340px;background:transparent">8</div>
<div class="a" style="left:0;top:357px;width:25px;height:1px;background:#4a4a4a"></div>
<div class="rh" style="top:358px;background:transparent">9</div>
<div class="a" style="left:0;top:375px;width:25px;height:1px;background:#4a4a4a"></div>
<div class="rh" style="top:376px;background:transparent">10</div>
<div class="a" style="left:0;top:393px;width:25px;height:1px;background:#4a4a4a"></div>
<div class="rh" style="top:394px;background:transparent">11</div>
<div class="a" style="left:0;top:411px;width:25px;height:1px;background:#4a4a4a"></div>
<div class="rh" style="top:412px;background:transparent">12</div>
<div class="a" style="left:0;top:429px;width:25px;height:1px;background:#4a4a4a"></div>
<div class="rh" style="top:430px;background:transparent">13</div>
<div class="a" style="left:0;top:447px;width:25px;height:1px;background:#4a4a4a"></div>
<div class="rh" style="top:448px;background:transparent">14</div>
<div class="a" style="left:0;top:465px;width:25px;height:1px;background:#4a4a4a"></div>
<div class="rh" style="top:466px;background:transparent">15</div>
<div class="a" style="left:0;top:483px;width:25px;height:1px;background:#4a4a4a"></div>
<div class="rh" style="top:484px;background:transparent">16</div>
<div class="a" style="left:0;top:501px;width:25px;height:1px;background:#4a4a4a"></div>
<div class="rh" style="top:502px;background:transparent">17</div>
<div class="a" style="left:0;top:519px;width:25px;height:1px;background:#4a4a4a"></div>
<div class="rh" style="top:520px;background:transparent">18</div>
<div class="a" style="left:0;top:537px;width:25px;height:1px;background:#4a4a4a"></div>
<div class="rh" style="top:538px;background:transparent">19</div>
<div class="a" style="left:0;top:555px;width:25px;height:1px;background:#4a4a4a"></div>
<div class="rh" style="top:556px;background:transparent">20</div>
<div class="a" style="left:0;top:573px;width:25px;height:1px;background:#4a4a4a"></div>
<div class="rh" style="top:574px;background:transparent">21</div>
<div class="a" style="left:0;top:591px;width:25px;height:1px;background:#4a4a4a"></div>
<div class="rh" style="top:592px;background:transparent">22</div>
<div class="a" style="left:0;top:609px;width:25px;height:1px;background:#4a4a4a"></div>
<div class="rh" style="top:610px;background:transparent">23</div>
<div class="a" style="left:0;top:627px;width:25px;height:1px;background:#4a4a4a"></div>
<div class="rh" style="top:628px;background:transparent">24</div>
<div class="a" style="left:0;top:645px;width:25px;height:1px;background:#4a4a4a"></div>
<div class="rh" style="top:646px;background:transparent">25</div>
<div class="a" style="left:0;top:663px;width:25px;height:1px;background:#4a4a4a"></div>
<div class="rh" style="top:664px;background:transparent">26</div>
<div class="a" style="left:0;top:681px;width:25px;height:1px;background:#4a4a4a"></div>
<div class="rh" style="top:682px;background:transparent">27</div>
<div class="a" style="left:0;top:699px;width:25px;height:1px;background:#4a4a4a"></div>
<div class="rh" style="top:700px;background:transparent">28</div>
<div class="a" style="left:0;top:717px;width:25px;height:1px;background:#4a4a4a"></div>
<div class="rh" style="top:718px;background:transparent">29</div>
<div class="a" style="left:0;top:735px;width:25px;height:1px;background:#4a4a4a"></div>
<div class="rh" style="top:736px;background:transparent">30</div>
<div class="a" style="left:0;top:753px;width:25px;height:1px;background:#4a4a4a"></div>
<div class="rh" style="top:754px;background:transparent">31</div>
<div class="a" style="left:0;top:771px;width:25px;height:1px;background:#4a4a4a"></div>
<div class="rh" style="top:772px;background:#5b5b5b">32</div>
<div class="a" style="left:0;top:789px;width:25px;height:1px;background:#4a4a4a"></div>
<div class="a" style="left:23px;top:772px;width:2px;height:18px;background:#1f8f4f"></div>
<div class="a" style="left:25px;top:214px;width:1px;height:576px;background:#5a5a5a"></div>
<div class="gv" style="left:140px;top:214px;height:576px;background:#d9d9d9"></div>
<div class="gv" style="left:214px;top:214px;height:576px;background:#d9d9d9"></div>
<div class="gv" style="left:288px;top:214px;height:576px;background:#d9d9d9"></div>
<div class="gv" style="left:355px;top:214px;height:576px;background:#d9d9d9"></div>
<div class="gv" style="left:422px;top:214px;height:576px;background:#d9d9d9"></div>
<div class="gv" style="left:517px;top:214px;height:576px;background:#d9d9d9"></div>
<div class="gv" style="left:595px;top:214px;height:576px;background:#d9d9d9"></div>
<div class="gv" style="left:659px;top:214px;height:576px;background:#d9d9d9"></div>
<div class="gv" style="left:723px;top:214px;height:576px;background:#d9d9d9"></div>
<div class="gv" style="left:787px;top:214px;height:576px;background:#d9d9d9"></div>
<div class="gv" style="left:849px;top:214px;height:576px;background:#d9d9d9"></div>
<div class="gv" style="left:911px;top:214px;height:576px;background:#d9d9d9"></div>
<div class="gv" style="left:973px;top:214px;height:576px;background:#d9d9d9"></div>
<div class="gv" style="left:1035px;top:214px;height:576px;background:#d9d9d9"></div>
<div class="gv" style="left:1097px;top:214px;height:576px;background:#d9d9d9"></div>
<div class="gv" style="left:1159px;top:214px;height:576px;background:#d9d9d9"></div>
<div class="gv" style="left:1221px;top:214px;height:576px;background:#d9d9d9"></div>
<div class="gv" style="left:1283px;top:214px;height:576px;background:#d9d9d9"></div>
<div class="gv" style="left:1345px;top:214px;height:576px;background:#d9d9d9"></div>
<div class="gv" style="left:1407px;top:214px;height:576px;background:#d9d9d9"></div>
<div class="gh" style="left:26px;top:232px;width:1414px;background:#d9d9d9"></div>
<div class="gh" style="left:26px;top:250px;width:1414px;background:#d9d9d9"></div>
<div class="gh" style="left:26px;top:268px;width:1414px;background:#d9d9d9"></div>
<div class="gh" style="left:26px;top:286px;width:1414px;background:#d9d9d9"></div>
<div class="gh" style="left:26px;top:304px;width:1414px;background:#d9d9d9"></div>
<div class="gh" style="left:26px;top:322px;width:1414px;background:#d9d9d9"></div>
<div class="gh" style="left:26px;top:340px;width:1414px;background:#d9d9d9"></div>
<div class="gh" style="left:26px;top:358px;width:1414px;background:#d9d9d9"></div>
<div class="gh" style="left:26px;top:376px;width:1414px;background:#d9d9d9"></div>
<div class="gh" style="left:26px;top:394px;width:1414px;background:#d9d9d9"></div>
<div class="gh" style="left:26px;top:412px;width:1414px;background:#d9d9d9"></div>
<div class="gh" style="left:26px;top:430px;width:1414px;background:#d9d9d9"></div>
<div class="gh" style="left:26px;top:448px;width:1414px;background:#d9d9d9"></div>
<div class="gh" style="left:26px;top:466px;width:1414px;background:#d9d9d9"></div>
<div class="gh" style="left:26px;top:484px;width:1414px;background:#d9d9d9"></div>
<div class="gh" style="left:26px;top:502px;width:1414px;background:#d9d9d9"></div>
<div class="gh" style="left:26px;top:520px;width:1414px;background:#d9d9d9"></div>
<div class="gh" style="left:26px;top:538px;width:1414px;background:#d9d9d9"></div>
<div class="gh" style="left:26px;top:556px;width:1414px;background:#d9d9d9"></div>
<div class="gh" style="left:26px;top:574px;width:1414px;background:#d9d9d9"></div>
<div class="gh" style="left:26px;top:592px;width:1414px;background:#d9d9d9"></div>
<div class="gh" style="left:26px;top:610px;width:1414px;background:#d9d9d9"></div>
<div class="gh" style="left:26px;top:628px;width:1414px;background:#d9d9d9"></div>
<div class="gh" style="left:26px;top:646px;width:1414px;background:#d9d9d9"></div>
<div class="gh" style="left:26px;top:664px;width:1414px;background:#d9d9d9"></div>
<div class="gh" style="left:26px;top:682px;width:1414px;background:#d9d9d9"></div>
<div class="gh" style="left:26px;top:700px;width:1414px;background:#d9d9d9"></div>
<div class="gh" style="left:26px;top:718px;width:1414px;background:#d9d9d9"></div>
<div class="gh" style="left:26px;top:736px;width:1414px;background:#d9d9d9"></div>
<div class="gh" style="left:26px;top:754px;width:1414px;background:#d9d9d9"></div>
<div class="gh" style="left:26px;top:772px;width:1414px;background:#d9d9d9"></div>
<div class="gh" style="left:26px;top:790px;width:1414px;background:#d9d9d9"></div>
<div class="a" style="left:26px;top:233px;width:570px;height:432px;background:#fff"></div>
<div class="a" style="left:140px;top:214px;width:1px;height:18px;background:#fff"></div>
<div class="bl" style="left:140px;top:232px;width:456px;height:18px"></div>
<div class="bl" style="left:26px;top:250px;width:114px;height:396px"></div>
<div class="bl" style="left:659px;top:250px;width:64px;height:54px"></div>
<div class="a" style="left:25px;top:250px;width:116px;height:1px;background:#000"></div>
<div class="a" style="left:25px;top:268px;width:116px;height:1px;background:#000"></div>
<div class="a" style="left:25px;top:286px;width:116px;height:1px;background:#000"></div>
<div class="a" style="left:25px;top:304px;width:116px;height:1px;background:#000"></div>
<div class="a" style="left:25px;top:322px;width:116px;height:1px;background:#000"></div>
<div class="a" style="left:25px;top:340px;width:116px;height:1px;background:#000"></div>
<div class="a" style="left:25px;top:358px;width:116px;height:1px;background:#000"></div>
<div class="a" style="left:25px;top:376px;width:116px;height:1px;background:#000"></div>
<div class="a" style="left:25px;top:394px;width:116px;height:1px;background:#000"></div>
<div class="a" style="left:25px;top:412px;width:116px;height:1px;background:#000"></div>
<div class="a" style="left:25px;top:430px;width:116px;height:1px;background:#000"></div>
<div class="a" style="left:25px;top:448px;width:116px;height:1px;background:#000"></div>
<div class="a" style="left:25px;top:466px;width:116px;height:1px;background:#000"></div>
<div class="a" style="left:25px;top:484px;width:116px;height:1px;background:#000"></div>
<div class="a" style="left:25px;top:502px;width:116px;height:1px;background:#000"></div>
<div class="a" style="left:25px;top:520px;width:116px;height:1px;background:#000"></div>
<div class="a" style="left:25px;top:538px;width:116px;height:1px;background:#000"></div>
<div class="a" style="left:25px;top:556px;width:116px;height:1px;background:#000"></div>
<div class="a" style="left:25px;top:574px;width:116px;height:1px;background:#000"></div>
<div class="a" style="left:25px;top:592px;width:116px;height:1px;background:#000"></div>
<div class="a" style="left:25px;top:610px;width:116px;height:1px;background:#000"></div>
<div class="a" style="left:25px;top:628px;width:116px;height:1px;background:#000"></div>
<div class="a" style="left:25px;top:646px;width:116px;height:1px;background:#000"></div>
<div class="a" style="left:140px;top:250px;width:1px;height:397px;background:#000"></div>
<div class="a" style="left:140px;top:250px;width:75px;height:1px;background:#000"></div>
<div class="a" style="left:140px;top:268px;width:75px;height:1px;background:#000"></div>
<div class="a" style="left:140px;top:286px;width:75px;height:1px;background:#000"></div>
<div class="a" style="left:140px;top:304px;width:75px;height:1px;background:#000"></div>
<div class="a" style="left:140px;top:322px;width:75px;height:1px;background:#000"></div>
<div class="a" style="left:140px;top:340px;width:75px;height:1px;background:#000"></div>
<div class="a" style="left:140px;top:358px;width:75px;height:1px;background:#000"></div>
<div class="a" style="left:140px;top:376px;width:75px;height:1px;background:#000"></div>
<div class="a" style="left:140px;top:394px;width:75px;height:1px;background:#000"></div>
<div class="a" style="left:140px;top:412px;width:75px;height:1px;background:#000"></div>
<div class="a" style="left:140px;top:430px;width:75px;height:1px;background:#000"></div>
<div class="a" style="left:140px;top:448px;width:75px;height:1px;background:#000"></div>
<div class="a" style="left:140px;top:466px;width:75px;height:1px;background:#000"></div>
<div class="a" style="left:140px;top:484px;width:75px;height:1px;background:#000"></div>
<div class="a" style="left:140px;top:502px;width:75px;height:1px;background:#000"></div>
<div class="a" style="left:140px;top:520px;width:75px;height:1px;background:#000"></div>
<div class="a" style="left:140px;top:538px;width:75px;height:1px;background:#000"></div>
<div class="a" style="left:140px;top:556px;width:75px;height:1px;background:#000"></div>
<div class="a" style="left:214px;top:250px;width:1px;height:307px;background:#000"></div>
<div class="a" style="left:214px;top:286px;width:75px;height:1px;background:#000"></div>
<div class="a" style="left:214px;top:304px;width:382px;height:1px;background:#000"></div>
<div class="a" style="left:214px;top:322px;width:382px;height:1px;background:#000"></div>
<div class="a" style="left:214px;top:340px;width:382px;height:1px;background:#000"></div>
<div class="a" style="left:214px;top:358px;width:382px;height:1px;background:#000"></div>
<div class="a" style="left:214px;top:376px;width:382px;height:1px;background:#000"></div>
<div class="a" style="left:214px;top:394px;width:382px;height:1px;background:#000"></div>
<div class="a" style="left:214px;top:412px;width:382px;height:1px;background:#000"></div>
<div class="a" style="left:214px;top:430px;width:382px;height:1px;background:#000"></div>
<div class="a" style="left:214px;top:448px;width:382px;height:1px;background:#000"></div>
<div class="a" style="left:214px;top:466px;width:382px;height:1px;background:#000"></div>
<div class="a" style="left:214px;top:484px;width:382px;height:1px;background:#000"></div>
<div class="a" style="left:214px;top:502px;width:382px;height:1px;background:#000"></div>
<div class="a" style="left:214px;top:520px;width:382px;height:1px;background:#000"></div>
<div class="a" style="left:288px;top:304px;width:1px;height:217px;background:#000"></div>
<div class="a" style="left:355px;top:304px;width:1px;height:217px;background:#000"></div>
<div class="a" style="left:422px;top:304px;width:1px;height:217px;background:#000"></div>
<div class="a" style="left:517px;top:304px;width:1px;height:217px;background:#000"></div>
<div class="a" style="left:595px;top:304px;width:1px;height:217px;background:#000"></div>
<div class="a" style="left:288px;top:286px;width:1px;height:19px;background:#000"></div>
<div class="a" style="left:355px;top:556px;width:68px;height:1px;background:#000"></div>
<div class="a" style="left:355px;top:574px;width:68px;height:1px;background:#000"></div>
<div class="a" style="left:355px;top:592px;width:68px;height:1px;background:#000"></div>
<div class="a" style="left:355px;top:556px;width:1px;height:37px;background:#000"></div>
<div class="a" style="left:422px;top:556px;width:1px;height:37px;background:#000"></div>
<div class="a" style="left:422px;top:592px;width:96px;height:1px;background:#000"></div>
<div class="a" style="left:422px;top:610px;width:96px;height:1px;background:#000"></div>
<div class="a" style="left:422px;top:628px;width:96px;height:1px;background:#000"></div>
<div class="a" style="left:422px;top:592px;width:1px;height:37px;background:#000"></div>
<div class="a" style="left:517px;top:592px;width:1px;height:37px;background:#000"></div>
<div class="a" style="left:517px;top:628px;width:79px;height:1px;background:#000"></div>
<div class="a" style="left:517px;top:646px;width:79px;height:1px;background:#000"></div>
<div class="a" style="left:517px;top:628px;width:1px;height:19px;background:#000"></div>
<div class="a" style="left:595px;top:628px;width:1px;height:19px;background:#000"></div>
<div class="a" style="left:659px;top:250px;width:129px;height:1px;background:#000"></div>
<div class="a" style="left:659px;top:268px;width:129px;height:1px;background:#000"></div>
<div class="a" style="left:659px;top:286px;width:129px;height:1px;background:#000"></div>
<div class="a" style="left:659px;top:304px;width:129px;height:1px;background:#000"></div>
<div class="a" style="left:659px;top:250px;width:1px;height:55px;background:#000"></div>
<div class="a" style="left:723px;top:250px;width:1px;height:55px;background:#000"></div>
<div class="a" style="left:787px;top:250px;width:1px;height:55px;background:#000"></div>
<div class="t lb" style="left:28px;top:214.5px;color:#000">Q2. Weighted Moving Average</div>
<div class="t lb" style="left:140px;top:232.5px;width:74px;text-align:center">Demand</div>
<div class="t lb" style="left:214px;top:232.5px;width:74px;text-align:center">3PMA</div>
<div class="t lb" style="left:288px;top:232.5px;width:67px;text-align:center">3PF</div>
<div class="t lb" style="left:355px;top:232.5px;width:67px;text-align:center">Error</div>
<div class="t lb" style="left:422px;top:232.5px;width:95px;text-align:center">Abs Error</div>
<div class="t lb" style="left:517px;top:232.5px;width:78px;text-align:center">MAPE</div>
<div class="t lb" style="left:28px;top:250.5px;">Oct</div>
<div class="t lb" style="left:28px;top:268.5px;">Nov</div>
<div class="t lb" style="left:28px;top:286.5px;">Dec</div>
<div class="t lb" style="left:28px;top:304.5px;">Jan</div>
<div class="t lb" style="left:28px;top:322.5px;">Feb</div>
<div class="t lb" style="left:28px;top:340.5px;">Mar</div>
<div class="t lb" style="left:28px;top:358.5px;">Apr</div>
<div class="t lb" style="left:28px;top:376.5px;">May</div>
<div class="t lb" style="left:28px;top:394.5px;">Jun</div>
<div class="t lb" style="left:28px;top:412.5px;">Jul</div>
<div class="t lb" style="left:28px;top:430.5px;">Aug</div>
<div class="t lb" style="left:28px;top:448.5px;">Sep</div>
<div class="t lb" style="left:28px;top:466.5px;">Oct</div>
<div class="t lb" style="left:28px;top:484.5px;">Nov</div>
<div class="t lb" style="left:28px;top:502.5px;">Dec</div>
<div class="t lb" style="left:28px;top:520.5px;">Total Demand</div>
<div class="t lb" style="left:28px;top:538.5px;">Avg. Demand</div>
<div class="t lb" style="left:28px;top:556.5px;">Total Bias</div>
<div class="t lb" style="left:28px;top:574.5px;">Ave. Bias</div>
<div class="t lb" style="left:28px;top:592.5px;">Absolute Dev</div>
<div class="t lb" style="left:28px;top:610.5px;">Mean Abs Dev</div>
<div class="t lb" style="left:28px;top:628.5px;">MAPE</div>
<div class="t nm" style="left:140px;top:250.5px;width:68px;text-align:right">9,797</div>
<div class="t nm" style="left:140px;top:268.5px;width:68px;text-align:right">11,134</div>
<div class="t nm" style="left:140px;top:286.5px;width:68px;text-align:right">10,687</div>
<div class="t nm" style="left:140px;top:304.5px;width:68px;text-align:right">9,724</div>
<div class="t nm" style="left:140px;top:322.5px;width:68px;text-align:right">8,786</div>
<div class="t nm" style="left:140px;top:340.5px;width:68px;text-align:right">9,254</div>
<div class="t nm" style="left:140px;top:358.5px;width:68px;text-align:right">10,691</div>
<div class="t nm" style="left:140px;top:376.5px;width:68px;text-align:right">9,256</div>
<div class="t nm" style="left:140px;top:394.5px;width:68px;text-align:right">8,700</div>
<div class="t nm" style="left:140px;top:412.5px;width:68px;text-align:right">10,192</div>
<div class="t nm" style="left:140px;top:430.5px;width:68px;text-align:right">10,751</div>
<div class="t nm" style="left:140px;top:448.5px;width:68px;text-align:right">9,724</div>
<div class="t nm" style="left:140px;top:466.5px;width:68px;text-align:right">10,193</div>
<div class="t nm" style="left:140px;top:484.5px;width:68px;text-align:right">11,599</div>
<div class="t nm" style="left:140px;top:502.5px;width:68px;text-align:right">11,130</div>
<div class="t lb" style="left:659px;top:250.5px;width:64px;text-align:center">alpha</div>
<div class="t nm" style="left:723px;top:250.5px;width:64px;text-align:center">0.6</div>
<div class="t lb" style="left:659px;top:268.5px;width:64px;text-align:center">beta</div>
<div class="t nm" style="left:723px;top:268.5px;width:64px;text-align:center">0.3</div>
<div class="t lb" style="left:659px;top:286.5px;width:64px;text-align:center">gama</div>
<div class="t nm" style="left:723px;top:286.5px;width:64px;text-align:center">0.1</div>
<div class="a" style="left:139px;top:771px;width:77px;height:20px;border:2px solid #1d7044;border-bottom:none"></div>
<div class="a" style="left:212px;top:786px;width:5px;height:4px;background:#1d7044"></div>
<div class="a" style="left:1439px;top:55px;width:1px;height:131px;background:#505050"></div>
<div class="a" style="left:0;top:790px;width:1440px;height:26px;background:#333"></div>
<div class="a" style="left:0;top:790px;width:60px;height:26px;background:#2c2c2c"></div>
<svg style="left:14px;top:797px" width="32" height="11" viewBox="0 0 32 11"><path d="M7 0.500v10L0.500 5.500z" fill="#5a5a5a"/><path d="M24 0.500v10l6.500-5z" fill="#5a5a5a"/></svg>
<div class="a" style="left:60px;top:790px;width:317px;height:26px;background:#212121"></div>
<div class="a" style="left:60px;top:793px;width:1px;height:20px;background:#3a3a3a"></div>
<div class="a" style="left:297px;top:795px;width:1px;height:18px;background:#3a3a3a"></div>
<div class="a" style="left:377px;top:795px;width:1px;height:18px;background:#3a3a3a"></div>
<div class="a" style="left:414px;top:795px;width:1px;height:18px;background:#3a3a3a"></div>
<div class="a" style="left:140px;top:790px;width:78px;height:22px;background:#fff;border-radius:0 0 3px 3px"></div>
<div class="a" style="left:60px;top:795px;width:80px;text-align:center;font-size:12.5px;color:#8a8a8a;line-height:14px">Q1</div>
<div class="a" style="left:218px;top:795px;width:79px;text-align:center;font-size:12.5px;color:#8a8a8a;line-height:14px">Q3</div>
<div class="a" style="left:297px;top:795px;width:80px;text-align:center;font-size:12.5px;color:#8a8a8a;line-height:14px">Q4</div>
<div class="a" style="left:140px;top:795px;width:78px;text-align:center;font-size:12.5px;font-weight:bold;color:#1d8a50;line-height:14px">Q2</div>
<svg style="left:390px;top:797px" width="11" height="11" viewBox="0 0 11 11"><path d="M5.500 0.500v10M0.500 5.500h10" stroke="#d8d8d8" stroke-width="2"/></svg>
<div class="a" style="left:0;top:815px;width:1440px;height:1px;background:#0a0a0a"></div>
<div class="a" style="left:0;top:816px;width:1440px;height:23px;background:linear-gradient(#474747,#3d3d3d);border-radius:0 0 6px 6px"></div>
<div class="a" style="left:24px;top:820px;font-size:11.8px;color:#dedede;line-height:15px">Ready</div>
<div class="a" style="left:1122px;top:816px;width:37px;height:22px;background:#555"></div>
<svg style="left:1133px;top:821px" width="14" height="13" viewBox="0 0 14 13"><rect x="0.500" y="0.500" width="13" height="12" fill="none" stroke="#e6e6e6"/><path d="M0.500 4.500h13M0.500 8.500h13M4.800 0.500v12M9.200 0.500v12" stroke="#e6e6e6"/></svg>
<svg style="left:1169px;top:821px" width="15" height="13" viewBox="0 0 15 13"><rect x="0.500" y="0.500" width="14" height="12" fill="none" stroke="#e6e6e6"/><rect x="3.500" y="2.500" width="8" height="8" fill="none" stroke="#e6e6e6"/><path d="M5 5h5M5 7h5M5 9h5" stroke="#e6e6e6" stroke-width="0.8"/></svg>
<svg style="left:1205px;top:821px" width="15" height="13" viewBox="0 0 15 13"><path d="M0.500 0.500h14v12H0.500z" fill="none" stroke="#e6e6e6"/><path d="M4.500 0.500v5h4v-5" fill="none" stroke="#e6e6e6"/></svg>
<div class="a" style="left:1238px;top:826px;width:8px;height:2px;background:#e6e6e6"></div>
<div class="a" style="left:1254px;top:825px;width:98px;height:4px;border-radius:2px;background:#6e6e6e"></div>
<div class="a" style="left:1298px;top:821px;width:12px;height:12px;border-radius:6px;background:#d0d0d0"></div>
<svg style="left:1359px;top:822px" width="10" height="10" viewBox="0 0 10 10"><path d="M5 0.500v9M0.500 5h9" stroke="#e6e6e6" stroke-width="1.800"/></svg>
<div class="a" style="left:1386px;top:820px;font-size:11.5px;color:#dedede;line-height:15px">117%</div>
<div class="a" style="left:0;top:839px;width:1440px;height:61px;background:linear-gradient(90deg,#5c2c08,#6e3a10 40%,#5a2e0e 75%,#3a1e0c)"></div>
<div class="a" style="left:1400px;top:839px;width:40px;height:61px;background:linear-gradient(#3a2210,#a0601e 60%,#6a3a14)"></div>
<div class="a" style="left:23px;top:847px;width:17px;height:53px;background:linear-gradient(90deg,#cfcfcf,#ececec)"></div>
<div class="a" style="left:23px;top:849px;width:3px;height:51px;background:repeating-linear-gradient(#151515 0 2px,#bbb 2px 3.500px)"></div>
<div class="a" style="left:31px;top:857px;width:7px;height:1px;background:#777"></div>
<div class="a" style="left:31px;top:868px;width:9px;height:14px;background:#3a6a7e"></div>
<div class="a" style="left:31px;top:886px;width:5px;height:1px;background:#d88"></div>
<div class="a" style="left:40px;top:839px;width:1360px;height:61px;border-radius:6px 6px 0 0;background:linear-gradient(90deg,rgba(140,100,70,0.55),rgba(110,60,20,0.35) 10%,rgba(110,60,20,0.3) 50%,rgba(90,50,20,0.35) 90%);border-top:1px solid rgba(200,160,120,0.35)"></div>
<svg style="left:49px;top:850px" width="37" height="35" viewBox="0 0 37 35"><defs><linearGradient id="fd1" x1="0" y1="0" x2="0" y2="1"><stop offset="0" stop-color="#1ec8f8"/><stop offset="1" stop-color="#1a6ff0"/></linearGradient></defs><rect width="37" height="35" rx="2" fill="url(#fd1)"/><path d="M19 0h16a2 2 0 0 1 2 2v31a2 2 0 0 1-2 2H22c-2-5-3-10-2-15h-4c0-7 1-14 3-20z" fill="#eaf2fb"/><path d="M10 8v4M25 8v4" stroke="#222" stroke-width="1.500"/><path d="M7 22c6 5 17 5 23 0" fill="none" stroke="#222" stroke-width="1.500"/></svg>
<div class="a" style="left:65px;top:894px;width:4px;height:4px;border-radius:2px;background:#f4c9a8"></div>
<svg style="left:96px;top:848px" width="39" height="39" viewBox="0 0 39 39"><defs><radialGradient id="si" cx="50%" cy="50%" r="50%"><stop offset="0" stop-color="#2a3a6a"/><stop offset="0.7" stop-color="#1a1e40"/><stop offset="1" stop-color="#101020"/></radialGradient><radialGradient id="si2" cx="50%" cy="50%" r="50%"><stop offset="0" stop-color="#fff"/><stop offset="0.25" stop-color="#aef" stop-opacity="0.9"/><stop offset="1" stop-color="#aef" stop-opacity="0"/></radialGradient></defs><circle cx="19.500" cy="19.500" r="19.500" fill="#f0f0f0"/><circle cx="19.500" cy="19.500" r="17.800" fill="url(#si)"/><path d="M6 14c6-4 14-2 28 6" stroke="#e040a0" stroke-width="3" fill="none" opacity="0.75"/><path d="M8 28c6-8 14-12 24-12" stroke="#30d0e0" stroke-width="2.500" fill="none" opacity="0.7"/><path d="M16 5c2 8 4 18 8 30" stroke="#e050c0" stroke-width="2" fill="none" opacity="0.6"/><path d="M10 22c8 0 14 2 22 6" stroke="#40e0a0" stroke-width="2" fill="none" opacity="0.6"/><circle cx="19.500" cy="19.500" r="9" fill="url(#si2)"/></svg>
<svg style="left:145px;top:848px" width="39" height="39" viewBox="0 0 39 39"><defs><linearGradient id="lp" x1="0" y1="0" x2="0" y2="1"><stop offset="0" stop-color="#cfd4d8"/><stop offset="1" stop-color="#8e9498"/></linearGradient></defs><circle cx="19.500" cy="19.500" r="19.500" fill="url(#lp)"/><path d="M30 8c-6 0-12 4-15 10l-5 1-3 3 5 1 4 4 1 5 3-3 1-5c6-3 9-10 9-16z" fill="#4a4e52"/><circle cx="24" cy="14" r="2" fill="#bbb"/></svg>
<svg style="left:193px;top:848px" width="39" height="39" viewBox="0 0 39 39"><defs><linearGradient id="sf" x1="0" y1="0" x2="0" y2="1"><stop offset="0" stop-color="#1ab0f8"/><stop offset="1" stop-color="#1a5ee0"/></linearGradient></defs><circle cx="19.500" cy="19.500" r="19.500" fill="#f4f4f4"/><circle cx="19.500" cy="19.500" r="17.500" fill="url(#sf)"/><circle cx="19.500" cy="19.500" r="15" fill="none" stroke="#cfe8ff" stroke-width="1" stroke-dasharray="1 2" opacity="0.7"/><path d="M31 8L21 21 18 18z" fill="#f0302a"/><path d="M8 31L18 18l3 3z" fill="#eee"/></svg>
<svg style="left:242px;top:847px" width="39" height="40" viewBox="0 0 39 40"><defs><radialGradient id="ff" cx="40%" cy="60%" r="60%"><stop offset="0" stop-color="#ffbd2e"/><stop offset="0.6" stop-color="#ff6a1a"/><stop offset="1" stop-color="#f0145a"/></radialGradient></defs><path d="M34 8c3 4 5 9 5 13 0 10-9 19-20 19S0 31 0 20c0-5 2-9 5-12 0 3 1 5 2 6 1-5 5-9 9-10-1 2-1 4 0 5 3-1 6 0 8 2 0-4 2-8 6-11 1 4 3 6 4 8z" fill="url(#ff)"/><circle cx="19" cy="22" r="8.500" fill="#7a2ad0"/><path d="M8 18c4-3 10-2 12 1-3 0-6 1-8 3z" fill="#ffb020"/></svg>
<div class="a" style="left:259px;top:894px;width:4px;height:4px;border-radius:2px;background:#f4c9a8"></div>
<svg style="left:290px;top:850px" width="39" height="35" viewBox="0 0 39 35"><rect x="9" y="0" width="30" height="35" rx="2" fill="#1a7a48"/><rect x="24" y="0" width="15" height="9" fill="#22c585"/><rect x="24" y="9" width="15" height="9" fill="#1e9f66"/><rect x="9" y="18" width="30" height="9" fill="#187142"/><rect x="9" y="27" width="30" height="8" fill="#0f5a33"/><rect x="0" y="7" width="20" height="20" rx="2" fill="#127a3e"/><path d="M5 11.500l9 11M14 11.500l-9 11" stroke="#fff" stroke-width="2.600"/></svg>
<div class="a" style="left:307px;top:894px;width:4px;height:4px;border-radius:2px;background:#f4c9a8"></div>
<svg style="left:339px;top:850px" width="39" height="35" viewBox="0 0 39 35"><rect x="9" y="0" width="30" height="35" rx="2" fill="#2b5fc0"/><rect x="9" y="0" width="30" height="9" fill="#21a0f0"/><rect x="9" y="9" width="30" height="9" fill="#2a7ce0"/><rect x="9" y="27" width="30" height="8" fill="#1e3e9a"/><rect x="0" y="7" width="20" height="20" rx="2" fill="#1f4fb8"/><path d="M3.500 11l2.500 11 4-9 4 9 2.500-11" fill="none" stroke="#fff" stroke-width="2"/></svg>
<div class="a" style="left:356px;top:894px;width:4px;height:4px;border-radius:2px;background:#f4c9a8"></div>
<svg style="left:387px;top:850px" width="39" height="35" viewBox="0 0 39 35"><circle cx="23" cy="17.500" r="17" fill="#e2491c"/><path d="M23 0.500a17 17 0 0 1 17 17H23z" fill="#ff8a65"/><path d="M23 17.500h17a17 17 0 0 1-17 17z" fill="#d43a10"/><rect x="0" y="7" width="20" height="20" rx="2" fill="#c7281a"/><path d="M6.500 23V11.500h5a3.300 3.300 0 0 1 0 6.600h-5" fill="none" stroke="#fff" stroke-width="2.400"/></svg>
<svg style="left:436px;top:848px" width="38" height="39" viewBox="0 0 38 39"><g transform="rotate(-4 19 19)"><rect x="2" y="3" width="34" height="34" rx="2" fill="#7a8a96"/><rect x="2" y="2" width="34" height="33" rx="2" fill="#f8f8f8"/><rect x="2" y="2" width="34" height="9" fill="#f03a3a"/><text x="19" y="9.500" font-size="6.500" fill="#fff" text-anchor="middle" font-family="Liberation Sans">MAY</text><text x="19" y="30" font-size="18" fill="#222" text-anchor="middle" font-family="Liberation Sans">29</text></g></svg>
<svg style="left:487px;top:847px" width="36" height="41" viewBox="0 0 36 41"><g transform="rotate(-8 18 20)"><rect x="3" y="2" width="30" height="37" rx="2.500" fill="#3a3a3a"/><rect x="3" y="1" width="30" height="36" rx="2.500" fill="#fbfbfb"/><circle cx="9" cy="10" r="2.300" fill="#ff9500"/><circle cx="9" cy="17" r="2.300" fill="#1ea0f0"/><circle cx="9" cy="24" r="2.300" fill="#34c759"/><circle cx="9" cy="31" r="2.300" fill="#d060e0"/><path d="M14 10h15M14 17h15M14 24h15M14 31h15" stroke="#ddd" stroke-width="0.800"/></g></svg>
<svg style="left:534px;top:847px" width="37" height="41" viewBox="0 0 37 41"><g transform="rotate(-6 18 20)"><rect x="4" y="3" width="29" height="36" fill="#fffde8"/><rect x="4" y="3" width="29" height="6" fill="#f9cf2a"/><path d="M6 13h25M6 16h25M6 19h25M6 22h25M6 25h25M6 28h25M6 31h25M6 34h25" stroke="#d8d8d0" stroke-width="0.600"/></g></svg>
<svg style="left:582px;top:848px" width="40" height="39" viewBox="0 0 40 39"><path d="M20 3c11 0 19 6 19 14s-8 14-19 14c-2 0-4 0-6-1l-7 4 2-6C4 25 1 21 1 17 1 9 9 3 20 3z" fill="#1a9cf0"/><path d="M26 20c7 0 12 3 12 8s-5 8-12 8l-4 2 1-2c-4-1-8-4-8-8 0-5 5-8 11-8z" fill="#eef4fb"/><circle cx="22" cy="28" r="1.300" fill="#1a3e9a"/><circle cx="26" cy="28" r="1.300" fill="#1a3e9a"/><circle cx="30" cy="28" r="1.300" fill="#1a3e9a"/></svg>
<div class="a" style="left:604px;top:845px;width:23px;height:17px;border-radius:9px;background:#e8131b;color:#fff;font-size:11px;line-height:17px;text-align:center">502</div>
<svg style="left:630px;top:850px" width="40" height="36" viewBox="0 0 40 36"><rect x="0" y="0" width="35" height="31" rx="4" fill="#28d85a"/><rect x="6" y="8" width="13" height="15" rx="2" fill="#e8f0e8"/><circle cx="30" cy="26" r="9.500" fill="#f0f4f0"/><path d="M26 22c0 4 3 8 7 8l1-2-2-1-1 1c-2-1-3-2-3-4l1-1-1-2z" fill="#28c850"/></svg>
<div class="a" style="left:655px;top:845px;width:19px;height:17px;border-radius:9px;background:#e8131b;color:#fff;font-size:11px;line-height:17px;text-align:center">23</div>
<svg style="left:679px;top:849px" width="40" height="37" viewBox="0 0 40 37"><rect x="0" y="0" width="39" height="37" rx="3" fill="#9a9ea2"/><circle cx="19.500" cy="18.500" r="15" fill="#3a3a3a"/><circle cx="19.500" cy="18.500" r="12" fill="none" stroke="#d8d8d8" stroke-width="2" stroke-dasharray="2 1.500"/><circle cx="19.500" cy="18.500" r="10" fill="#555"/><path d="M19.500 18.500V8M19.500 18.500l9 5M19.500 18.500l-9 5" stroke="#c8c8c8" stroke-width="2.500"/><circle cx="19.500" cy="18.500" r="3" fill="#777"/></svg>
<div class="a" style="left:704px;top:845px;width:17px;height:17px;border-radius:9px;background:#e8131b;color:#fff;font-size:11px;line-height:17px;text-align:center">1</div>
<svg style="left:735px;top:850px" width="22" height="36" viewBox="0 0 22 36"><path d="M2 10C2 5 6 1.800 11 1.800S20 5 20 10c0 4-3 6-5.500 8-2 1.500-3.500 3-3.500 6v2" fill="none" stroke="#b8aca4" stroke-width="3"/><rect x="9.500" y="30" width="3" height="4" fill="#b8aca4"/></svg>
<svg style="left:775px;top:848px" width="40" height="39" viewBox="0 0 40 39"><defs><linearGradient id="it" x1="0" y1="0" x2="1" y2="1"><stop offset="0" stop-color="#ff4a8a"/><stop offset="0.5" stop-color="#c040f0"/><stop offset="1" stop-color="#30b0f0"/></linearGradient></defs><circle cx="20" cy="19.500" r="19.500" fill="url(#it)"/><circle cx="20" cy="19.500" r="17.500" fill="#f6f6fa"/><path d="M15 27V11l12-2v15" fill="none" stroke="#e83a7a" stroke-width="2.500"/><circle cx="12.500" cy="27" r="3.500" fill="#a040e0"/><circle cx="24.500" cy="24.500" r="3.500" fill="#30a0f0"/></svg>
<svg style="left:825px;top:848px" width="39" height="39" viewBox="0 0 39 39"><circle cx="19.500" cy="19.500" r="19.500" fill="#f4f4f4"/><ellipse cx="19.500" cy="10.500" rx="5" ry="8" fill="#f5a623" opacity="0.85" transform="rotate(0 19.500 19.500)"/><ellipse cx="19.500" cy="10.500" rx="5" ry="8" fill="#f8e71c" opacity="0.85" transform="rotate(45 19.500 19.500)"/><ellipse cx="19.500" cy="10.500" rx="5" ry="8" fill="#7ed321" opacity="0.85" transform="rotate(90 19.500 19.500)"/><ellipse cx="19.500" cy="10.500" rx="5" ry="8" fill="#50c878" opacity="0.85" transform="rotate(135 19.500 19.500)"/><ellipse cx="19.500" cy="10.500" rx="5" ry="8" fill="#4a90e2" opacity="0.85" transform="rotate(180 19.500 19.500)"/><ellipse cx="19.500" cy="10.500" rx="5" ry="8" fill="#9b59b6" opacity="0.85" transform="rotate(225 19.500 19.500)"/><ellipse cx="19.500" cy="10.500" rx="5" ry="8" fill="#e0509a" opacity="0.85" transform="rotate(270 19.500 19.500)"/><ellipse cx="19.500" cy="10.500" rx="5" ry="8" fill="#ff5a36" opacity="0.85" transform="rotate(315 19.500 19.500)"/></svg>
<svg style="left:873px;top:848px" width="39" height="39" viewBox="0 0 39 39"><defs><linearGradient id="bk" x1="0" y1="0" x2="0" y2="1"><stop offset="0" stop-color="#ffa010"/><stop offset="1" stop-color="#f05a10"/></linearGradient></defs><circle cx="19.500" cy="19.500" r="19.500" fill="#f4f4f4"/><circle cx="19.500" cy="19.500" r="18" fill="url(#bk)"/><path d="M7 11c4-1 9-1 12 2 3-3 8-3 13-2v16c-5-1-10-1-13 2-3-3-8-3-12-2z" fill="#fff"/><path d="M19.500 13v16" stroke="#e08020" stroke-width="1"/></svg>
<svg style="left:922px;top:848px" width="39" height="39" viewBox="0 0 39 39"><defs><linearGradient id="as" x1="0" y1="0" x2="0" y2="1"><stop offset="0" stop-color="#1ec0fa"/><stop offset="1" stop-color="#1a6ef0"/></linearGradient></defs><circle cx="19.500" cy="19.500" r="19.500" fill="#f4f4f4"/><circle cx="19.500" cy="19.500" r="18" fill="url(#as)"/><path d="M13 30l10-19M26 30L16 11M9 24h22" stroke="#fff" stroke-width="2.600"/></svg>
<div class="a" style="left:949px;top:845px;width:17px;height:17px;border-radius:9px;background:#e8131b;color:#fff;font-size:11px;line-height:17px;text-align:center">5</div>
<svg style="left:967px;top:845px" width="45" height="45" viewBox="0 0 45 45"><circle cx="22.500" cy="22.500" r="22.500" fill="#15c39a"/><path d="M32 14a12 12 0 1 0 2 13h-9" fill="none" stroke="#fff" stroke-width="3"/><path d="M33 27v6" stroke="#fff" stroke-width="3"/></svg>
<svg style="left:1020px;top:845px" width="42" height="43" viewBox="0 0 42 43"><defs><radialGradient id="gl" cx="35%" cy="30%" r="70%"><stop offset="0" stop-color="#c8e8ff"/><stop offset="0.5" stop-color="#3a9ae8"/><stop offset="1" stop-color="#1a5ab8"/></radialGradient></defs><circle cx="16" cy="16" r="15.500" fill="url(#gl)"/><path d="M6 10c3 0 6 2 6 6s-3 5-2 9M18 6c4 2 6 6 10 6" fill="none" stroke="#2a70c0" stroke-width="2.500" opacity="0.7"/><rect x="15" y="32" width="3" height="5" fill="#e8a030"/><rect x="7" y="36" width="19" height="3" fill="#d8d8d8"/><rect x="27" y="12" width="12" height="10" rx="1.500" fill="#e89830"/><path d="M29.500 12V9a3.500 3.500 0 0 1 7 0v3" fill="none" stroke="#c8c8c8" stroke-width="1.600"/></svg>
<div class="a" style="left:1073px;top:855px;width:1px;height:30px;background:rgba(230,190,150,0.55)"></div>
<svg style="left:1089px;top:850px" width="39" height="35" viewBox="0 0 39 35"><circle cx="23" cy="17.500" r="17" fill="#e2491c"/><path d="M23 0.500a17 17 0 0 1 17 17H23z" fill="#ff8a65"/><path d="M23 17.500h17a17 17 0 0 1-17 17z" fill="#d43a10"/><rect x="0" y="7" width="20" height="20" rx="2" fill="#c7281a"/><path d="M6.500 23V11.500h5a3.300 3.300 0 0 1 0 6.600h-5" fill="none" stroke="#fff" stroke-width="2.400"/></svg>
<svg style="left:1138px;top:848px" width="39" height="39" viewBox="0 0 39 39"><rect width="39" height="39" rx="9" fill="#2d8cff"/><rect x="7" y="13" width="18" height="14" rx="3" fill="#fff"/><path d="M26 18l7-4v12l-7-4z" fill="#fff"/></svg>
<div class="a" style="left:1155px;top:894px;width:4px;height:4px;border-radius:2px;background:#f4c9a8"></div>
<svg style="left:1187px;top:845px" width="36" height="42" viewBox="0 0 36 42"><circle cx="18" cy="24" r="17.500" fill="#e8e8f0"/><defs><linearGradient id="mc" x1="0" y1="0" x2="0" y2="1"><stop offset="0" stop-color="#8a80b0"/><stop offset="0.5" stop-color="#c8a0b0"/><stop offset="1" stop-color="#40405a"/></linearGradient></defs><circle cx="18" cy="24" r="16" fill="url(#mc)"/><path d="M3 30c5-6 10-10 18-8 5 1 8 4 12 4-2 8-8 13-15 13S5 36 3 30z" fill="#3a3030"/><path d="M14 0h8v8h5l-9 8-9-8h5z" fill="#b8c0c8"/></svg>
<div class="a" style="left:1203px;top:894px;width:4px;height:4px;border-radius:2px;background:#f4c9a8"></div>
<svg style="left:1237px;top:845px" width="36" height="42" viewBox="0 0 36 42"><circle cx="18" cy="24" r="17" fill="#f8f8f8"/><rect x="9" y="16" width="8" height="8" fill="#f25022"/><rect x="18" y="16" width="8" height="8" fill="#7fba00"/><rect x="9" y="25" width="8" height="8" fill="#00a4ef"/><rect x="18" y="25" width="8" height="8" fill="#ffb900"/><path d="M14 0h8v7h6l-10 9-10-9h6z" fill="#2ec840"/></svg>
<div class="a" style="left:1252px;top:894px;width:4px;height:4px;border-radius:2px;background:#f4c9a8"></div>
<div class="a" style="left:1289px;top:847px;width:1px;height:44px;background:rgba(230,190,150,0.55)"></div>
<svg style="left:1313px;top:850px" width="22" height="36" viewBox="0 0 22 36"><path d="M2 10C2 5 6 1.800 11 1.800S20 5 20 10c0 4-3 6-5.500 8-2 1.500-3.500 3-3.500 6v2" fill="none" stroke="#b8aca4" stroke-width="3"/><rect x="9.500" y="30" width="3" height="4" fill="#b8aca4"/></svg>
<svg style="left:1357px;top:845px" width="33" height="43" viewBox="0 0 33 43"><defs><linearGradient id="tr" x1="0" y1="0" x2="1" y2="0"><stop offset="0" stop-color="#4a4e52"/><stop offset="0.5" stop-color="#7a7e82"/><stop offset="1" stop-color="#44484c"/></linearGradient></defs><path d="M2 9h29l-3 32c0 1-1 2-2 2H7c-1 0-2-1-2-2z" fill="url(#tr)"/><ellipse cx="16.500" cy="9.500" rx="14.500" ry="3" fill="#5a5e62"/><path d="M4 9c2-5 5-7 9-6 3-2 7-1 9 1 4 0 7 2 8 5z" fill="#d8d8d8"/><path d="M10 6l3 2M17 5l3 2M22 6l2 2" stroke="#3a6ad8" stroke-width="1.500"/><path d="M14 5l2 2" stroke="#e03a3a" stroke-width="1.500"/></svg>
</body></html>
